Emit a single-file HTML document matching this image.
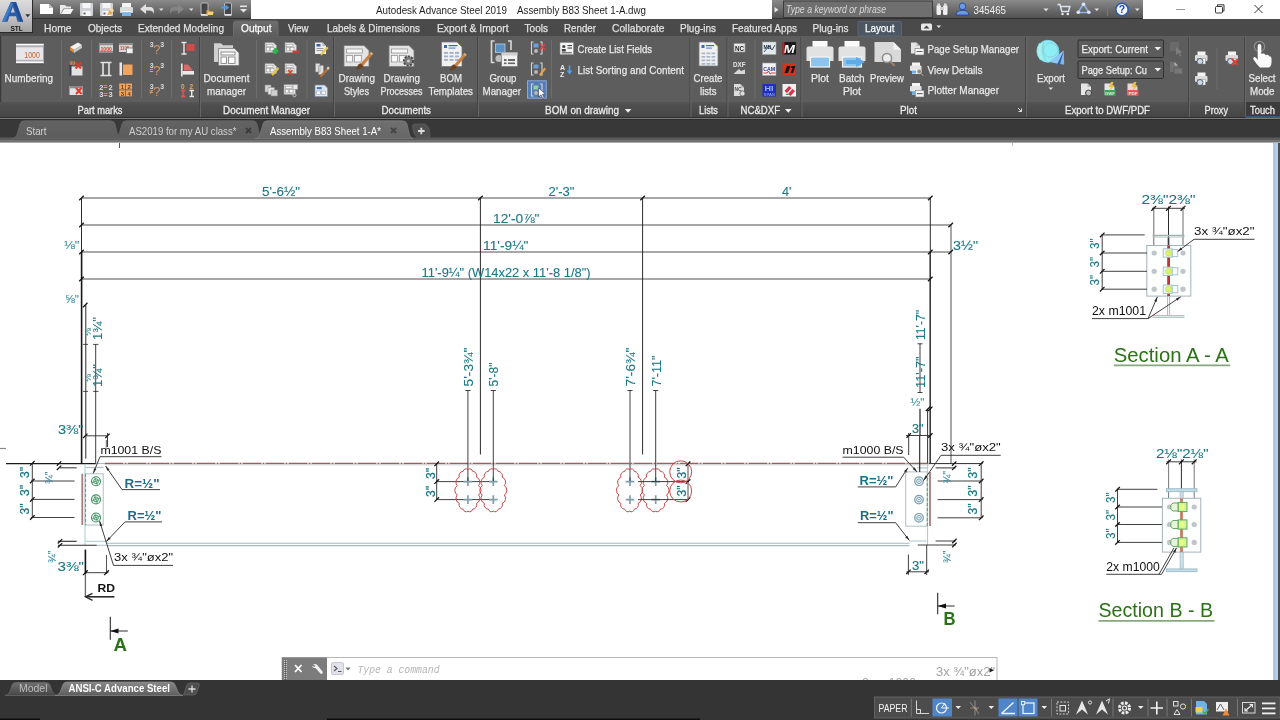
<!DOCTYPE html>
<html lang="en"><head><meta charset="utf-8"><title>Autodesk Advance Steel 2019 - Assembly B83 Sheet 1-A.dwg</title>
<style>html,body{margin:0;padding:0;background:#fff;overflow:hidden}body{width:1280px;height:720px;font-family:"Liberation Sans",sans-serif}svg{display:block;will-change:transform;font-family:"Liberation Sans",sans-serif}</style></head><body>
<svg width="1280" height="720" viewBox="0 0 1280 720">
<defs>
<linearGradient id="gApp" x1="0" y1="0" x2="0" y2="1"><stop offset="0" stop-color="#dcdcdc"/><stop offset="0.55" stop-color="#c2c0c4"/><stop offset="1" stop-color="#a2a2a2"/></linearGradient>
<linearGradient id="gQat" x1="0" y1="0" x2="0" y2="1"><stop offset="0" stop-color="#8a8a8a"/><stop offset="0.55" stop-color="#686868"/><stop offset="0.92" stop-color="#525252"/><stop offset="0.93" stop-color="#303030"/><stop offset="1" stop-color="#303030"/></linearGradient>
<linearGradient id="gA" x1="0" y1="0" x2="1" y2="1"><stop offset="0" stop-color="#4a8fd6"/><stop offset="1" stop-color="#1b4f9c"/></linearGradient>
<linearGradient id="gTabAct" x1="0" y1="0" x2="0" y2="1"><stop offset="0" stop-color="#6e6e6e"/><stop offset="1" stop-color="#5d5d5d"/></linearGradient>
<linearGradient id="gIconW" x1="0" y1="0" x2="0" y2="1"><stop offset="0" stop-color="#fafafa"/><stop offset="1" stop-color="#c8c8c8"/></linearGradient>
<linearGradient id="gFileTab" x1="0" y1="0" x2="0" y2="1"><stop offset="0" stop-color="#636363"/><stop offset="1" stop-color="#5c5c5c"/></linearGradient>
<linearGradient id="gFileTabA" x1="0" y1="0" x2="0" y2="1"><stop offset="0" stop-color="#707070"/><stop offset="1" stop-color="#666"/></linearGradient>
<linearGradient id="gTitle" x1="0" y1="0" x2="0" y2="1"><stop offset="0" stop-color="#545454"/><stop offset="0.3" stop-color="#4e4e4e"/><stop offset="1" stop-color="#464646"/></linearGradient>
<linearGradient id="gLt" x1="0" y1="0" x2="0" y2="1"><stop offset="0" stop-color="#6e6e6e"/><stop offset="1" stop-color="#464646"/></linearGradient><linearGradient id="gLtA" x1="0" y1="0" x2="0" y2="1"><stop offset="0" stop-color="#888"/><stop offset="1" stop-color="#5e5e5e"/></linearGradient>
</defs>
<rect x="0" y="0" width="1280" height="720" fill="#ffffff" />
<rect x="0" y="0" width="1280" height="19" fill="#ffffff" />
<rect x="32" y="0" width="219" height="19.5" fill="url(#gQat)" />
<rect x="772" y="0" width="371" height="19.5" fill="url(#gQat)" />
<rect x="0" y="19" width="1280" height="17" fill="#4a4a4a" />
<rect x="0" y="36" width="1280" height="66" fill="#5d5d5d" />
<rect x="0" y="36" width="1.2" height="82" fill="#3a3a3a" />
<rect x="0" y="102" width="1280" height="15" fill="url(#gTitle)" />
<rect x="0" y="117" width="1280" height="1" fill="#2e2e2e" />
<rect x="0" y="118" width="1280" height="1" fill="#7a7a7a" />
<rect x="0" y="119" width="1280" height="1" fill="#2d2d2d" />
<rect x="0" y="120" width="1280" height="18" fill="#383838" />
<rect x="0" y="137.5" width="1280" height="3" fill="#5a5a5a" />
<rect x="0" y="140" width="1280" height="2.6" fill="#737373" />
<rect x="0" y="0" width="32" height="32" fill="url(#gApp)" />
<rect x="32" y="0" width="1" height="32" fill="#2a2a2a" />
<rect x="0" y="32" width="33" height="1" fill="#2a2a2a" />
<path d="M2 21.8 L10.8 2 H16 L23.2 21.8 H17.6 L16 16.2 H9.4 L7.6 21.8 Z M10.8 12.4 H14.8 L12.9 7 Z" stroke="none" fill="#2a5ca8" stroke-width="1" fill-rule="evenodd"/>
<path d="M10.8 2 H16 L23.2 21.8 H20.4 L13.2 3.6 Z" stroke="none" fill="#1f4a8e" stroke-width="1" opacity="0.8"/>
<path d="M2 21.8 L10.8 2 L13.2 3.6 L5.2 21.8 Z" stroke="none" fill="#4a88cc" stroke-width="1" opacity="0.7"/>
<path d="M25.3 14.2 L30.3 14.2 L27.8 17.2 Z" stroke="none" fill="#333" stroke-width="1" />
<text x="10.5" y="30.6" font-size="7" fill="#1a1a1a" font-weight="bold" textLength="12.3" lengthAdjust="spacingAndGlyphs" >STL</text>
<path d="M40 4 H49 L53 8 V14 H40 Z" stroke="none" fill="#fff" stroke-width="1" />
<path d="M49 4 V8 H53 Z" stroke="none" fill="#bbb" stroke-width="1" />
<path d="M60 14 V5 H65 L66.5 6.5 H71 V8.5 H63.5 L60.5 14 Z" stroke="none" fill="#e8e8e8" stroke-width="1" />
<path d="M61 14 L64 9 H73.5 L70.5 14 Z" stroke="none" fill="#f4f4f4" stroke-width="1" />
<rect x="80" y="3" width="13" height="13" fill="#cfd3d8" rx="1"/>
<rect x="82.5" y="3" width="8" height="5" fill="#f6f6f6" />
<rect x="82.5" y="11" width="8" height="5" fill="#f6f6f6" />
<rect x="83.5" y="12.5" width="2" height="2" fill="#666" />
<rect x="100" y="3" width="13" height="13" fill="#cfd3d8" rx="1"/>
<rect x="102.5" y="3" width="8" height="5" fill="#f6f6f6" />
<rect x="102.5" y="11" width="8" height="5" fill="#f6f6f6" />
<rect x="103.5" y="12.5" width="2" height="2" fill="#666" />
<path d="M107 15.5 L109.5 10 L113 13.5 Z" stroke="none" fill="#e6a64a" stroke-width="1" />
<path d="M109 9.5 L111 7.5 L114 10.5 L112.5 12.5Z" stroke="none" fill="#f3d9a8" stroke-width="1" />
<rect x="122" y="3" width="9" height="4" fill="#f4f4f4" />
<rect x="120" y="7" width="13" height="6" fill="#dcdcdc" rx="1"/>
<rect x="122" y="11" width="9" height="5" fill="#7fb6e6" />
<rect x="122" y="11" width="9" height="1.2" fill="#f4f4f4" />
<path d="M140 9 L146 4 V7 H150 Q154 7 154 12 V14 Q153 10.5 149.5 10.5 H146 V14 Z" stroke="none" fill="#e0e0e0" stroke-width="1" />
<path d="M159 8.5 L163.5 8.5 L161.2 11 Z" stroke="none" fill="#ddd" stroke-width="1" />
<path d="M184 9 L178 4 V7 H174 Q170 7 170 12 V14 Q171 10.5 174.5 10.5 H178 V14 Z" stroke="none" fill="#858585" stroke-width="1" />
<path d="M189 8.5 L193.5 8.5 L191.2 11 Z" stroke="none" fill="#ddd" stroke-width="1" />
<rect x="201" y="3" width="7" height="12.5" fill="#454545" stroke="#cfcfcf" stroke-width="0.8" rx="1"/>
<rect x="201" y="14" width="7" height="1.5" fill="#e4e4e4" />
<path d="M206.5 15 V10.2 H209 L210 11.2 H213 V15 Z" stroke="none" fill="#e0aa48" stroke-width="1" />
<path d="M207 15 L208.3 12 H213.8 L212.6 15 Z" stroke="none" fill="#f3cf7a" stroke-width="1" />
<rect x="224.5" y="3" width="7" height="12.5" fill="#454545" stroke="#cfcfcf" stroke-width="0.8" rx="1"/>
<rect x="224.5" y="14" width="7" height="1.5" fill="#e4e4e4" />
<path d="M221 6.6 H225.5 V4.6 L229.3 7.6 L225.5 10.6 V8.6 H221 Z" stroke="none" fill="#4a9ae8" stroke-width="1" />
<rect x="240" y="5.5" width="7" height="1.6" fill="#e6e6e6" />
<path d="M240 9 H247 L243.5 12.5 Z" stroke="none" fill="#e6e6e6" stroke-width="1" />
<text x="376" y="13.5" font-size="11.5" fill="#1e1e1e" textLength="131" lengthAdjust="spacingAndGlyphs" >Autodesk Advance Steel 2019</text>
<text x="517" y="13.5" font-size="11.5" fill="#1e1e1e" textLength="129" lengthAdjust="spacingAndGlyphs" >Assembly B83 Sheet 1-A.dwg</text>
<path d="M774.5 7 L778.5 9.7 L774.5 12.5 Z" stroke="none" fill="#e6e6e6" stroke-width="1" />
<rect x="783.5" y="1" width="149" height="16.5" fill="#6f6f6f" stroke="#3c3c3c" stroke-width="1"/>
<text x="786" y="12.8" font-size="11" fill="#d9d9d9" font-style="italic" textLength="100" lengthAdjust="spacingAndGlyphs" >Type a keyword or phrase</text>
<rect x="936.5" y="5" width="4.5" height="10" fill="#efefef" rx="1.5"/>
<rect x="943" y="5" width="4.5" height="10" fill="#efefef" rx="1.5"/>
<rect x="940" y="7" width="4" height="3" fill="#cfcfcf" />
<rect x="937.5" y="3.5" width="2.5" height="2.5" fill="#dedede" />
<rect x="944" y="3.5" width="2.5" height="2.5" fill="#dedede" />
<circle cx="962.5" cy="6.3" r="3.3" stroke="#1f3f8a" fill="#6a9ae6" stroke-width="0.8" />
<path d="M956 15 Q956.5 10.3 962.5 10.3 Q968.5 10.3 969 15 Z" stroke="#1f3f8a" fill="#6a9ae6" stroke-width="0.8" />
<text x="973.5" y="14" font-size="11.5" fill="#f0f0f0" textLength="32.5" lengthAdjust="spacingAndGlyphs" >345465</text>
<path d="M1043.5 8.5 H1048.5 L1046 11.2 Z" stroke="none" fill="#e8e8e8" stroke-width="1" />
<path d="M1057.5 4.5 H1060 L1061.8 11.5 H1068.5 L1069.8 6.5 H1061" stroke="#dbe4f2" fill="none" stroke-width="1.5" />
<circle cx="1062.5" cy="14" r="1.2" stroke="none" fill="#f2f2f2" stroke-width="1" />
<circle cx="1067.8" cy="14" r="1.2" stroke="none" fill="#f2f2f2" stroke-width="1" />
<path d="M1083.5 4 L1089 12.5 H1078 Z" stroke="#8fb0ea" fill="none" stroke-width="1.6" />
<circle cx="1083.5" cy="4.2" r="1.8" stroke="none" fill="#dfe8fb" stroke-width="1" />
<circle cx="1078.3" cy="12.3" r="1.8" stroke="none" fill="#dfe8fb" stroke-width="1" />
<circle cx="1088.8" cy="12.3" r="1.8" stroke="none" fill="#dfe8fb" stroke-width="1" />
<path d="M1094.5 8.5 H1099 L1096.8 11 Z" stroke="none" fill="#e8e8e8" stroke-width="1" />
<rect x="1107" y="3" width="1" height="13" fill="#777" />
<circle cx="1122" cy="9.5" r="6.2" stroke="#2b5bb0" fill="#f6f6f6" stroke-width="1.6" />
<text x="1122" y="13.3" font-size="10.5" fill="#1f4ca0" text-anchor="middle" font-weight="bold" >?</text>
<path d="M1135 8.5 H1139.5 L1137.3 11 Z" stroke="none" fill="#e8e8e8" stroke-width="1" />
<rect x="1176" y="9" width="9" height="1" fill="#9a9a9a" />
<rect x="1215.5" y="6.5" width="7" height="6.5" fill="none" stroke="#333" stroke-width="1" rx="1"/>
<path d="M1217.5 6.5 V4.8 H1224 V11 H1222.5" stroke="#333" fill="none" stroke-width="1" />
<path d="M1254.5 5 L1262.5 13 M1262.5 5 L1254.5 13" stroke="#333" fill="none" stroke-width="1" />
<path d="M233.5 36 V23 Q233.5 21 235.5 21 H276 Q278 21 278 23 V36 Z" stroke="#6b6b6b" fill="url(#gTabAct)" stroke-width="1" />
<rect x="234" y="35" width="43.5" height="1.5" fill="#5d5d5d" />
<rect x="858" y="21.5" width="43.5" height="14.5" fill="#4c5763" stroke="#586675" stroke-width="1" rx="1"/>
<text x="44" y="32" font-size="11.5" fill="#e2e2e2" textLength="27.5" lengthAdjust="spacingAndGlyphs" stroke="#e2e2e2" stroke-width="0.25" >Home</text>
<text x="88" y="32" font-size="11.5" fill="#e2e2e2" textLength="34" lengthAdjust="spacingAndGlyphs" stroke="#e2e2e2" stroke-width="0.25" >Objects</text>
<text x="138" y="32" font-size="11.5" fill="#e2e2e2" textLength="86" lengthAdjust="spacingAndGlyphs" stroke="#e2e2e2" stroke-width="0.25" >Extended Modeling</text>
<text x="241" y="32" font-size="11.5" fill="#ffffff" textLength="30.5" lengthAdjust="spacingAndGlyphs" stroke="#ffffff" stroke-width="0.25" >Output</text>
<text x="288" y="32" font-size="11.5" fill="#e2e2e2" textLength="20.5" lengthAdjust="spacingAndGlyphs" stroke="#e2e2e2" stroke-width="0.25" >View</text>
<text x="327" y="32" font-size="11.5" fill="#e2e2e2" textLength="93" lengthAdjust="spacingAndGlyphs" stroke="#e2e2e2" stroke-width="0.25" >Labels &amp; Dimensions</text>
<text x="437" y="32" font-size="11.5" fill="#e2e2e2" textLength="71.5" lengthAdjust="spacingAndGlyphs" stroke="#e2e2e2" stroke-width="0.25" >Export &amp; Import</text>
<text x="524.5" y="32" font-size="11.5" fill="#e2e2e2" textLength="23.5" lengthAdjust="spacingAndGlyphs" stroke="#e2e2e2" stroke-width="0.25" >Tools</text>
<text x="564" y="32" font-size="11.5" fill="#e2e2e2" textLength="32" lengthAdjust="spacingAndGlyphs" stroke="#e2e2e2" stroke-width="0.25" >Render</text>
<text x="612" y="32" font-size="11.5" fill="#e2e2e2" textLength="52.5" lengthAdjust="spacingAndGlyphs" stroke="#e2e2e2" stroke-width="0.25" >Collaborate</text>
<text x="680" y="32" font-size="11.5" fill="#e2e2e2" textLength="36" lengthAdjust="spacingAndGlyphs" stroke="#e2e2e2" stroke-width="0.25" >Plug-ins</text>
<text x="732" y="32" font-size="11.5" fill="#e2e2e2" textLength="65" lengthAdjust="spacingAndGlyphs" stroke="#e2e2e2" stroke-width="0.25" >Featured Apps</text>
<text x="812.5" y="32" font-size="11.5" fill="#e2e2e2" textLength="36" lengthAdjust="spacingAndGlyphs" stroke="#e2e2e2" stroke-width="0.25" >Plug-ins</text>
<text x="865" y="32" font-size="11.5" fill="#ffffff" textLength="29.5" lengthAdjust="spacingAndGlyphs" stroke="#ffffff" stroke-width="0.25" >Layout</text>
<rect x="921" y="23.5" width="11" height="7" fill="#e8e8e8" rx="1.5"/>
<path d="M923.5 28.5 H929.5 L926.5 25.5 Z" stroke="none" fill="#444" stroke-width="1" />
<path d="M936.5 25.5 H941 L938.8 28 Z" stroke="none" fill="#e8e8e8" stroke-width="1" />
<rect x="199.0" y="37" width="1" height="80" fill="#444444" />
<rect x="200.0" y="37" width="1" height="80" fill="#666666" />
<rect x="333.0" y="37" width="1" height="80" fill="#444444" />
<rect x="334.0" y="37" width="1" height="80" fill="#666666" />
<rect x="477.0" y="37" width="1" height="80" fill="#444444" />
<rect x="478.0" y="37" width="1" height="80" fill="#666666" />
<rect x="689.5" y="37" width="1" height="80" fill="#444444" />
<rect x="690.5" y="37" width="1" height="80" fill="#666666" />
<rect x="726.5" y="37" width="1" height="80" fill="#444444" />
<rect x="727.5" y="37" width="1" height="80" fill="#666666" />
<rect x="800.5" y="37" width="1" height="80" fill="#444444" />
<rect x="801.5" y="37" width="1" height="80" fill="#666666" />
<rect x="1025.0" y="37" width="1" height="80" fill="#444444" />
<rect x="1026.0" y="37" width="1" height="80" fill="#666666" />
<rect x="1188.0" y="37" width="1" height="80" fill="#444444" />
<rect x="1189.0" y="37" width="1" height="80" fill="#666666" />
<rect x="1244.0" y="37" width="1" height="80" fill="#444444" />
<rect x="1245.0" y="37" width="1" height="80" fill="#666666" />
<rect x="61" y="40" width="1" height="58" fill="#6e6e6e" />
<rect x="91" y="40" width="1" height="58" fill="#6e6e6e" />
<rect x="141" y="40" width="1" height="58" fill="#6e6e6e" />
<rect x="171" y="40" width="1" height="58" fill="#6e6e6e" />
<rect x="256" y="40" width="1" height="58" fill="#6e6e6e" />
<rect x="551" y="40" width="1" height="58" fill="#6e6e6e" />
<rect x="754.5" y="40" width="1" height="58" fill="#6e6e6e" />
<rect x="1216.5" y="48" width="1" height="41" fill="#6e6e6e" />
<rect x="306.5" y="40" width="1" height="58" fill="#6e6e6e" />
<rect x="1246" y="102" width="34" height="15" fill="#3c3c3c" />
<text x="77.5" y="114.3" font-size="11.5" fill="#ececec" textLength="45" lengthAdjust="spacingAndGlyphs" stroke="#ececec" stroke-width="0.3" >Part marks</text>
<text x="223" y="114.3" font-size="11.5" fill="#ececec" textLength="87" lengthAdjust="spacingAndGlyphs" stroke="#ececec" stroke-width="0.3" >Document Manager</text>
<text x="381.5" y="114.3" font-size="11.5" fill="#ececec" textLength="49.5" lengthAdjust="spacingAndGlyphs" stroke="#ececec" stroke-width="0.3" >Documents</text>
<text x="545" y="114.3" font-size="11.5" fill="#ececec" textLength="74" lengthAdjust="spacingAndGlyphs" stroke="#ececec" stroke-width="0.3" >BOM on drawing</text>
<text x="699" y="114.3" font-size="11.5" fill="#ececec" textLength="19" lengthAdjust="spacingAndGlyphs" stroke="#ececec" stroke-width="0.3" >Lists</text>
<text x="740.5" y="114.3" font-size="11.5" fill="#ececec" textLength="39.5" lengthAdjust="spacingAndGlyphs" stroke="#ececec" stroke-width="0.3" >NC&amp;DXF</text>
<text x="900" y="114.3" font-size="11.5" fill="#ececec" textLength="17" lengthAdjust="spacingAndGlyphs" stroke="#ececec" stroke-width="0.3" >Plot</text>
<text x="1065" y="114.3" font-size="11.5" fill="#ececec" textLength="85" lengthAdjust="spacingAndGlyphs" stroke="#ececec" stroke-width="0.3" >Export to DWF/PDF</text>
<text x="1204.5" y="114.3" font-size="11.5" fill="#ececec" textLength="23.5" lengthAdjust="spacingAndGlyphs" stroke="#ececec" stroke-width="0.3" >Proxy</text>
<text x="1250" y="114.3" font-size="11.5" fill="#ececec" textLength="25" lengthAdjust="spacingAndGlyphs" stroke="#ececec" stroke-width="0.3" >Touch</text>
<path d="M624.8 109 H631.4 L628.1 112.8 Z" stroke="none" fill="#f0f0f0" stroke-width="1" />
<path d="M785 109 H791.6 L788.3 112.8 Z" stroke="none" fill="#f0f0f0" stroke-width="1" />
<path d="M1018 108 L1021.5 111.5 M1021.5 108.5 V111.5 H1018.5" stroke="#ddd" fill="none" stroke-width="1" />
<rect x="1246" y="116.3" width="34" height="1.6" fill="#3d5f92" />
<text x="4.5" y="81.5" font-size="11.5" fill="#eaeaea" textLength="48.5" lengthAdjust="spacingAndGlyphs" stroke="#eaeaea" stroke-width="0.25" >Numbering</text>
<text x="203.5" y="81.5" font-size="11.5" fill="#eaeaea" textLength="46" lengthAdjust="spacingAndGlyphs" stroke="#eaeaea" stroke-width="0.25" >Document</text>
<text x="207" y="94.5" font-size="11.5" fill="#eaeaea" textLength="39" lengthAdjust="spacingAndGlyphs" stroke="#eaeaea" stroke-width="0.25" >manager</text>
<text x="338.5" y="81.5" font-size="11.5" fill="#eaeaea" textLength="36.5" lengthAdjust="spacingAndGlyphs" stroke="#eaeaea" stroke-width="0.25" >Drawing</text>
<text x="344" y="94.5" font-size="11.5" fill="#eaeaea" textLength="25" lengthAdjust="spacingAndGlyphs" stroke="#eaeaea" stroke-width="0.25" >Styles</text>
<text x="383.5" y="81.5" font-size="11.5" fill="#eaeaea" textLength="36.5" lengthAdjust="spacingAndGlyphs" stroke="#eaeaea" stroke-width="0.25" >Drawing</text>
<text x="380.5" y="94.5" font-size="11.5" fill="#eaeaea" textLength="42" lengthAdjust="spacingAndGlyphs" stroke="#eaeaea" stroke-width="0.25" >Processes</text>
<text x="440" y="81.5" font-size="11.5" fill="#eaeaea" textLength="22" lengthAdjust="spacingAndGlyphs" stroke="#eaeaea" stroke-width="0.25" >BOM</text>
<text x="428.5" y="94.5" font-size="11.5" fill="#eaeaea" textLength="44.5" lengthAdjust="spacingAndGlyphs" stroke="#eaeaea" stroke-width="0.25" >Templates</text>
<text x="489.5" y="81.5" font-size="11.5" fill="#eaeaea" textLength="27" lengthAdjust="spacingAndGlyphs" stroke="#eaeaea" stroke-width="0.25" >Group</text>
<text x="482.5" y="94.5" font-size="11.5" fill="#eaeaea" textLength="38.5" lengthAdjust="spacingAndGlyphs" stroke="#eaeaea" stroke-width="0.25" >Manager</text>
<text x="693.5" y="81.5" font-size="11.5" fill="#eaeaea" textLength="29" lengthAdjust="spacingAndGlyphs" stroke="#eaeaea" stroke-width="0.25" >Create</text>
<text x="700" y="94.5" font-size="11.5" fill="#eaeaea" textLength="16.5" lengthAdjust="spacingAndGlyphs" stroke="#eaeaea" stroke-width="0.25" >lists</text>
<text x="811" y="81.5" font-size="11.5" fill="#eaeaea" textLength="18" lengthAdjust="spacingAndGlyphs" stroke="#eaeaea" stroke-width="0.25" >Plot</text>
<text x="839" y="81.5" font-size="11.5" fill="#eaeaea" textLength="25.5" lengthAdjust="spacingAndGlyphs" stroke="#eaeaea" stroke-width="0.25" >Batch</text>
<text x="843" y="94.5" font-size="11.5" fill="#eaeaea" textLength="18" lengthAdjust="spacingAndGlyphs" stroke="#eaeaea" stroke-width="0.25" >Plot</text>
<text x="870" y="81.5" font-size="11.5" fill="#eaeaea" textLength="34" lengthAdjust="spacingAndGlyphs" stroke="#eaeaea" stroke-width="0.25" >Preview</text>
<text x="1037" y="81.5" font-size="11.5" fill="#eaeaea" textLength="28" lengthAdjust="spacingAndGlyphs" stroke="#eaeaea" stroke-width="0.25" >Export</text>
<text x="1248.5" y="81.6" font-size="11.5" fill="#eaeaea" textLength="27" lengthAdjust="spacingAndGlyphs" stroke="#eaeaea" stroke-width="0.25" >Select</text>
<text x="1250" y="94.7" font-size="11.5" fill="#eaeaea" textLength="24.5" lengthAdjust="spacingAndGlyphs" stroke="#eaeaea" stroke-width="0.25" >Mode</text>
<path d="M1048.5 87.5 H1053 L1050.8 90 Z" stroke="none" fill="#e0e0e0" stroke-width="1" />
<text x="577.5" y="52.5" font-size="11.5" fill="#eaeaea" textLength="74.5" lengthAdjust="spacingAndGlyphs" stroke="#eaeaea" stroke-width="0.25" >Create List Fields</text>
<text x="577.5" y="73.5" font-size="11.5" fill="#eaeaea" textLength="106.5" lengthAdjust="spacingAndGlyphs" stroke="#eaeaea" stroke-width="0.25" >List Sorting and Content</text>
<text x="927.5" y="52.5" font-size="11.5" fill="#eaeaea" textLength="91.5" lengthAdjust="spacingAndGlyphs" stroke="#eaeaea" stroke-width="0.25" >Page Setup Manager</text>
<text x="927.5" y="73.5" font-size="11.5" fill="#eaeaea" textLength="55" lengthAdjust="spacingAndGlyphs" stroke="#eaeaea" stroke-width="0.25" >View Details</text>
<text x="927.5" y="94" font-size="11.5" fill="#eaeaea" textLength="71.5" lengthAdjust="spacingAndGlyphs" stroke="#eaeaea" stroke-width="0.25" >Plotter Manager</text>
<rect x="1078" y="40" width="85.5" height="17.5" fill="#5c5c5c" stroke="#2e2e2e" stroke-width="1" rx="1"/>
<text x="1081.5" y="53" font-size="11.5" fill="#efefef" textLength="66.5" lengthAdjust="spacingAndGlyphs" stroke="#efefef" stroke-width="0.25" >Export: Current</text>
<path d="M1154.5 47 H1161 L1157.8 50.5 Z" stroke="none" fill="#f0f0f0" stroke-width="1" />
<rect x="1078" y="61" width="85.5" height="17.5" fill="#5c5c5c" stroke="#2e2e2e" stroke-width="1" rx="1"/>
<text x="1081.5" y="74" font-size="11.5" fill="#efefef" textLength="65.5" lengthAdjust="spacingAndGlyphs" stroke="#efefef" stroke-width="0.25" >Page Setup: Cu</text>
<path d="M1154.5 68 H1161 L1157.8 71.5 Z" stroke="none" fill="#f0f0f0" stroke-width="1" />
<g id="drawing">
<line x1="119.5" y1="143" x2="119.5" y2="148" stroke="#555" stroke-width="1" />
<line x1="81.5" y1="198" x2="931" y2="198" stroke="#8a8a8a" stroke-width="1.3" />
<line x1="81.5" y1="225" x2="951" y2="225" stroke="#8a8a8a" stroke-width="1.3" />
<line x1="81.5" y1="252" x2="951" y2="252" stroke="#8a8a8a" stroke-width="1.3" />
<line x1="81.5" y1="279" x2="931" y2="279" stroke="#8a8a8a" stroke-width="1.3" />
<line x1="81.5" y1="198" x2="81.5" y2="252" stroke="#2a2a2a" stroke-width="1" />
<line x1="81.6" y1="252" x2="81.6" y2="463.6" stroke="#161616" stroke-width="1.6" />
<line x1="79.2" y1="200.3" x2="83.8" y2="195.7" stroke="#141414" stroke-width="1.25" />
<line x1="79.2" y1="227.3" x2="83.8" y2="222.7" stroke="#141414" stroke-width="1.25" />
<line x1="79.2" y1="254.3" x2="83.8" y2="249.7" stroke="#141414" stroke-width="1.25" />
<line x1="79.2" y1="281.3" x2="83.8" y2="276.7" stroke="#141414" stroke-width="1.25" />
<line x1="85.8" y1="305" x2="85.8" y2="458.7" stroke="#2a2a2a" stroke-width="1" />
<line x1="95.7" y1="344" x2="95.7" y2="464" stroke="#2a2a2a" stroke-width="0.9" />
<line x1="83.1" y1="307.2" x2="87.5" y2="302.8" stroke="#141414" stroke-width="1.25" />
<line x1="83" y1="344.4" x2="88" y2="344.4" stroke="#2a2a2a" stroke-width="0.8" />
<line x1="93" y1="344.4" x2="98.5" y2="344.4" stroke="#2a2a2a" stroke-width="0.8" />
<line x1="83" y1="391.4" x2="88" y2="391.4" stroke="#2a2a2a" stroke-width="0.8" />
<line x1="93" y1="391.4" x2="98.5" y2="391.4" stroke="#2a2a2a" stroke-width="0.8" />
<line x1="480.4" y1="198" x2="480.4" y2="454.5" stroke="#2a2a2a" stroke-width="1" />
<line x1="642.6" y1="198" x2="642.6" y2="454.5" stroke="#2a2a2a" stroke-width="1" />
<line x1="478.09999999999997" y1="200.3" x2="482.7" y2="195.7" stroke="#141414" stroke-width="1.25" />
<line x1="640.3000000000001" y1="200.3" x2="644.9" y2="195.7" stroke="#141414" stroke-width="1.25" />
<line x1="930.3" y1="198" x2="930.3" y2="252" stroke="#2a2a2a" stroke-width="1" />
<line x1="930.2" y1="252" x2="930.2" y2="463.6" stroke="#3a3a3a" stroke-width="1.6" />
<line x1="951" y1="225" x2="951" y2="463.6" stroke="#3c3c3c" stroke-width="0.9" />
<line x1="928.0" y1="200.3" x2="932.5999999999999" y2="195.7" stroke="#141414" stroke-width="1.25" />
<line x1="948.4000000000001" y1="227.3" x2="953.0" y2="222.7" stroke="#141414" stroke-width="1.25" />
<line x1="928.0" y1="254.3" x2="932.5999999999999" y2="249.7" stroke="#141414" stroke-width="1.25" />
<line x1="948.4000000000001" y1="254.3" x2="953.0" y2="249.7" stroke="#141414" stroke-width="1.25" />
<line x1="928.0" y1="281.3" x2="932.5999999999999" y2="276.7" stroke="#141414" stroke-width="1.25" />
<text x="262" y="196" font-size="12.5" fill="#1b7886" textLength="38" lengthAdjust="spacingAndGlyphs" stroke="#1b7886" stroke-width="0.1" >5&#x27;-6½&quot;</text>
<text x="548.5" y="196" font-size="12.5" fill="#1b7886" textLength="26" lengthAdjust="spacingAndGlyphs" stroke="#1b7886" stroke-width="0.1" >2&#x27;-3&quot;</text>
<text x="782" y="196" font-size="12.5" fill="#1b7886" textLength="9.5" lengthAdjust="spacingAndGlyphs" stroke="#1b7886" stroke-width="0.1" >4&#x27;</text>
<text x="493" y="223" font-size="12.5" fill="#1b7886" textLength="46.5" lengthAdjust="spacingAndGlyphs" stroke="#1b7886" stroke-width="0.1" >12&#x27;-0⅞&quot;</text>
<text x="483" y="250" font-size="12.5" fill="#1b7886" textLength="45.5" lengthAdjust="spacingAndGlyphs" stroke="#1b7886" stroke-width="0.1" >11&#x27;-9¼&quot;</text>
<text x="421.5" y="277" font-size="12.5" fill="#1b7886" textLength="169" lengthAdjust="spacingAndGlyphs" stroke="#1b7886" stroke-width="0.1" >11&#x27;-9¼&quot; (W14x22 x 11&#x27;-8 1/8&quot;)</text>
<text x="64" y="249" font-size="11.5" fill="#3f8fa1" textLength="15.5" lengthAdjust="spacingAndGlyphs" stroke="#3f8fa1" stroke-width="0.1" >⅛&quot;</text>
<text x="65" y="302.5" font-size="11.5" fill="#3f8fa1" textLength="14" lengthAdjust="spacingAndGlyphs" stroke="#3f8fa1" stroke-width="0.1" >⅝&quot;</text>
<text x="953" y="250" font-size="12.5" fill="#1b7886" textLength="25" lengthAdjust="spacingAndGlyphs" stroke="#1b7886" stroke-width="0.1" >3½&quot;</text>
<text x="102" y="340" font-size="12.5" fill="#1b7886" textLength="23" lengthAdjust="spacingAndGlyphs" stroke="#1b7886" stroke-width="0.1" transform="rotate(-90 102 340)" >1¾&quot;</text>
<text x="102" y="387" font-size="12.5" fill="#1b7886" textLength="23" lengthAdjust="spacingAndGlyphs" stroke="#1b7886" stroke-width="0.1" transform="rotate(-90 102 387)" >1¾&quot;</text>
<text x="90.5" y="336" font-size="9" fill="#3f8fa1" textLength="8" lengthAdjust="spacingAndGlyphs" stroke="#3f8fa1" stroke-width="0.1" transform="rotate(-90 90.5 336)" >⅛</text>
<text x="90.5" y="382" font-size="9" fill="#3f8fa1" textLength="8" lengthAdjust="spacingAndGlyphs" stroke="#3f8fa1" stroke-width="0.1" transform="rotate(-90 90.5 382)" >⅛</text>
<text x="58" y="433.5" font-size="12.5" fill="#1b7886" textLength="25.5" lengthAdjust="spacingAndGlyphs" stroke="#1b7886" stroke-width="0.1" >3⅜&quot;</text>
<line x1="85.3" y1="435.8" x2="107.5" y2="435.8" stroke="#2a2a2a" stroke-width="0.9" />
<line x1="83.1" y1="438.0" x2="87.5" y2="433.6" stroke="#141414" stroke-width="1.25" />
<line x1="105.3" y1="438.0" x2="109.7" y2="433.6" stroke="#141414" stroke-width="1.25" />
<line x1="107.5" y1="433" x2="107.5" y2="447" stroke="#2a2a2a" stroke-width="0.9" />
<line x1="6" y1="463.6" x2="95.8" y2="463.6" stroke="#1a1a1a" stroke-width="1.3" />
<line x1="0" y1="448.5" x2="6" y2="448.5" stroke="#888" stroke-width="1.2" />
<line x1="104.5" y1="463.3" x2="929" y2="463.3" stroke="#7e3a3a" stroke-width="1" stroke-dasharray="19 1 2 1"/>
<line x1="104.5" y1="464.8" x2="929" y2="464.8" stroke="#c6c6c6" stroke-width="1" />
<line x1="95.8" y1="463.5" x2="104.5" y2="463.5" stroke="#9cc0cc" stroke-width="1" />
<line x1="85.4" y1="467.5" x2="103.5" y2="467.5" stroke="#a9c3cc" stroke-width="1.2" />
<line x1="917" y1="467.9" x2="927.6" y2="467.9" stroke="#a9c3cc" stroke-width="1.2" />
<line x1="106.5" y1="543.3" x2="909.5" y2="543.3" stroke="#a3b9bf" stroke-width="1.1" />
<line x1="106.5" y1="545.6" x2="909.5" y2="545.6" stroke="#a3b9bf" stroke-width="1.1" />
<line x1="85.8" y1="541.3" x2="106.5" y2="541.3" stroke="#a9c8d2" stroke-width="1" />
<line x1="96.7" y1="545.3" x2="106.5" y2="545.3" stroke="#a9c8d2" stroke-width="1" />
<line x1="909.5" y1="541" x2="926.7" y2="541" stroke="#a9c8d2" stroke-width="1" />
<line x1="85" y1="464" x2="85" y2="545.3" stroke="#a9c8d2" stroke-width="1" />
<line x1="927.6" y1="463.6" x2="927.6" y2="545" stroke="#a9c8d2" stroke-width="1" />
<rect x="85.2" y="473.8" width="18" height="51.2" fill="none" stroke="#aebfc6" stroke-width="1"/>
<line x1="82.3" y1="473.8" x2="82.3" y2="525" stroke="#a87c7c" stroke-width="1.8" />
<line x1="85.6" y1="474" x2="85.6" y2="525" stroke="#58a070" stroke-width="1" stroke-dasharray="3 2"/>
<circle cx="96" cy="481.2" r="4.5" stroke="#3f9062" fill="#f2f8f3" stroke-width="1.1" />
<circle cx="96" cy="481.2" r="2.4" stroke="#3f9062" fill="none" stroke-width="0.9" />
<path d="M91.8 482.7 L100.2 479.7 M94.5 477.0 L97.5 485.4" stroke="#3f9062" fill="none" stroke-width="0.8" />
<circle cx="96" cy="499.4" r="4.5" stroke="#3f9062" fill="#f2f8f3" stroke-width="1.1" />
<circle cx="96" cy="499.4" r="2.4" stroke="#3f9062" fill="none" stroke-width="0.9" />
<path d="M91.8 500.9 L100.2 497.9 M94.5 495.2 L97.5 503.59999999999997" stroke="#3f9062" fill="none" stroke-width="0.8" />
<circle cx="96" cy="517.5" r="4.5" stroke="#3f9062" fill="#f2f8f3" stroke-width="1.1" />
<circle cx="96" cy="517.5" r="2.4" stroke="#3f9062" fill="none" stroke-width="0.9" />
<path d="M91.8 519.0 L100.2 516.0 M94.5 513.3 L97.5 521.7" stroke="#3f9062" fill="none" stroke-width="0.8" />
<line x1="31" y1="481" x2="74.5" y2="481" stroke="#2a2a2a" stroke-width="0.9" />
<line x1="29.999999999999996" y1="483.3" x2="34.599999999999994" y2="478.7" stroke="#141414" stroke-width="1.25" />
<line x1="31" y1="499.4" x2="74.5" y2="499.4" stroke="#2a2a2a" stroke-width="0.9" />
<line x1="29.999999999999996" y1="501.7" x2="34.599999999999994" y2="497.09999999999997" stroke="#141414" stroke-width="1.25" />
<line x1="31" y1="517.5" x2="74.5" y2="517.5" stroke="#2a2a2a" stroke-width="0.9" />
<line x1="29.999999999999996" y1="519.8" x2="34.599999999999994" y2="515.2" stroke="#141414" stroke-width="1.25" />
<line x1="29.999999999999996" y1="465.6" x2="34.599999999999994" y2="461.0" stroke="#141414" stroke-width="1.25" />
<line x1="32.3" y1="463.3" x2="32.3" y2="517.5" stroke="#2a2a2a" stroke-width="0.9" />
<text x="28.5" y="478" font-size="13" fill="#1b7886" textLength="11" lengthAdjust="spacingAndGlyphs" stroke="#1b7886" stroke-width="0.25" transform="rotate(-90 28.5 478)" >3&quot;</text>
<text x="28.5" y="496" font-size="13" fill="#1b7886" textLength="11" lengthAdjust="spacingAndGlyphs" stroke="#1b7886" stroke-width="0.25" transform="rotate(-90 28.5 496)" >3&quot;</text>
<text x="28.5" y="514.5" font-size="13" fill="#1b7886" textLength="11" lengthAdjust="spacingAndGlyphs" stroke="#1b7886" stroke-width="0.25" transform="rotate(-90 28.5 514.5)" >3&quot;</text>
<line x1="60" y1="467.8" x2="76.7" y2="467.8" stroke="#444" stroke-width="1.1" />
<line x1="56.8" y1="465.8" x2="61.2" y2="461.40000000000003" stroke="#141414" stroke-width="1.25" />
<line x1="56.8" y1="470.0" x2="61.2" y2="465.6" stroke="#141414" stroke-width="1.25" />
<text x="52.5" y="484" font-size="10" fill="#3f8fa1" textLength="12.5" lengthAdjust="spacingAndGlyphs" stroke="#3f8fa1" stroke-width="0.1" transform="rotate(-90 52.5 484)" >¾&quot;</text>
<line x1="58" y1="541.3" x2="76.7" y2="541.3" stroke="#2a2a2a" stroke-width="1.1" />
<line x1="58" y1="545.3" x2="96.7" y2="545.3" stroke="#2a2a2a" stroke-width="1.1" />
<line x1="57.8" y1="543.5" x2="62.2" y2="539.0999999999999" stroke="#141414" stroke-width="1.25" />
<line x1="57.8" y1="547.5" x2="62.2" y2="543.0999999999999" stroke="#141414" stroke-width="1.25" />
<text x="56" y="563" font-size="10" fill="#3f8fa1" textLength="12.5" lengthAdjust="spacingAndGlyphs" stroke="#3f8fa1" stroke-width="0.1" transform="rotate(-90 56 563)" >¾&quot;</text>
<text x="57.5" y="571" font-size="12.5" fill="#1b7886" textLength="26.5" lengthAdjust="spacingAndGlyphs" stroke="#1b7886" stroke-width="0.1" >3⅜&quot;</text>
<line x1="85.4" y1="549.6" x2="85.4" y2="574" stroke="#161616" stroke-width="1.6" />
<line x1="85.4" y1="574" x2="85.4" y2="597" stroke="#6a6a6a" stroke-width="1.3" />
<line x1="106.5" y1="555" x2="106.5" y2="574" stroke="#555" stroke-width="1" />
<line x1="85.4" y1="572.7" x2="108.5" y2="572.7" stroke="#2a2a2a" stroke-width="0.9" />
<line x1="83.0" y1="575.1" x2="87.80000000000001" y2="570.3000000000001" stroke="#141414" stroke-width="1.25" />
<line x1="104.1" y1="575.1" x2="108.9" y2="570.3000000000001" stroke="#141414" stroke-width="1.25" />
<line x1="106.3" y1="440" x2="106.3" y2="447.5" stroke="#666" stroke-width="1" />
<text x="100.4" y="454.2" font-size="10.2" fill="#111" textLength="61" lengthAdjust="spacingAndGlyphs" >m1001 B/S</text>
<path d="M161.5 456.7 H100 L93.3 473.3" stroke="#2a2a2a" fill="none" stroke-width="0.9" />
<path d="M93.3 473.3 L94.0 468.2 L96.4 469.1 Z" stroke="none" fill="#2a2a2a" stroke-width="1" />
<text x="124.5" y="487.5" font-size="12.5" fill="#1a7088" font-weight="bold" textLength="35" lengthAdjust="spacingAndGlyphs" >R=½&quot;</text>
<path d="M160 489.6 H122 L105.6 466" stroke="#2a2a2a" fill="none" stroke-width="0.9" />
<path d="M105.6 466.0 L109.5 469.4 L107.4 470.8 Z" stroke="none" fill="#2a2a2a" stroke-width="1" />
<text x="127.5" y="519.7" font-size="12.5" fill="#1a7088" font-weight="bold" textLength="34" lengthAdjust="spacingAndGlyphs" >R=½&quot;</text>
<path d="M162 521.9 H125 L106.3 541.5" stroke="#2a2a2a" fill="none" stroke-width="0.9" />
<path d="M106.3 541.5 L108.8 537.0 L110.7 538.8 Z" stroke="none" fill="#2a2a2a" stroke-width="1" />
<text x="114" y="561" font-size="11.3" fill="#111" textLength="59" lengthAdjust="spacingAndGlyphs" >3x ¾&quot;øx2&quot;</text>
<path d="M173 565.4 H113.5 L99.6 521" stroke="#2a2a2a" fill="none" stroke-width="0.9" />
<path d="M99.6 521.0 L102.3 525.4 L99.9 526.2 Z" stroke="none" fill="#2a2a2a" stroke-width="1" />
<text x="97.5" y="592" font-size="11.5" fill="#111" font-weight="bold" textLength="17.5" lengthAdjust="spacingAndGlyphs" >RD</text>
<line x1="86" y1="596.8" x2="114.4" y2="596.8" stroke="#2a2a2a" stroke-width="1.6" />
<path d="M92.5 593.3 L85.5 596.8 L92.5 600.3" stroke="#2a2a2a" fill="none" stroke-width="1.4" />
<line x1="110.3" y1="616.7" x2="110.3" y2="639.7" stroke="#2a2a2a" stroke-width="1.1" />
<line x1="110.3" y1="631" x2="127.8" y2="631" stroke="#2a2a2a" stroke-width="1" />
<path d="M110.3 631 L118.5 628.6 V633.4 Z" stroke="none" fill="#111" stroke-width="1" />
<text x="113.5" y="651" font-size="18" fill="#2b7217" font-weight="bold" textLength="13.5" lengthAdjust="spacingAndGlyphs" >A</text>
<line x1="436.7" y1="463.8" x2="436.7" y2="499.6" stroke="#2a2a2a" stroke-width="0.9" />
<line x1="434.4" y1="466.1" x2="439.0" y2="461.5" stroke="#141414" stroke-width="1.25" />
<line x1="434.4" y1="483.90000000000003" x2="439.0" y2="479.3" stroke="#141414" stroke-width="1.25" />
<line x1="434.4" y1="501.90000000000003" x2="439.0" y2="497.3" stroke="#141414" stroke-width="1.25" />
<line x1="436.7" y1="481.6" x2="494.8" y2="481.6" stroke="#2a2a2a" stroke-width="0.9" />
<line x1="436.7" y1="499.6" x2="494.8" y2="499.6" stroke="#2a2a2a" stroke-width="0.9" />
<text x="434.5" y="479" font-size="13" fill="#1b7886" textLength="11" lengthAdjust="spacingAndGlyphs" stroke="#1b7886" stroke-width="0.25" transform="rotate(-90 434.5 479)" >3&quot;</text>
<text x="434.5" y="497" font-size="13" fill="#1b7886" textLength="11" lengthAdjust="spacingAndGlyphs" stroke="#1b7886" stroke-width="0.25" transform="rotate(-90 434.5 497)" >3&quot;</text>
<path d="M463.59999999999997 481.6 H472.2 M467.9 477.3 V485.90000000000003" stroke="#7f9fac" fill="none" stroke-width="1.7" />
<path d="M463.59999999999997 499.6 H472.2 M467.9 495.3 V503.90000000000003" stroke="#7f9fac" fill="none" stroke-width="1.7" />
<line x1="467.9" y1="390.5" x2="467.9" y2="481" stroke="#2a2a2a" stroke-width="0.9" />
<line x1="465.4" y1="390.5" x2="470.4" y2="390.5" stroke="#2a2a2a" stroke-width="0.9" />
<path d="M489.0 481.6 H497.6 M493.3 477.3 V485.90000000000003" stroke="#7f9fac" fill="none" stroke-width="1.7" />
<path d="M489.0 499.6 H497.6 M493.3 495.3 V503.90000000000003" stroke="#7f9fac" fill="none" stroke-width="1.7" />
<line x1="493.3" y1="390.5" x2="493.3" y2="481" stroke="#2a2a2a" stroke-width="0.9" />
<line x1="490.8" y1="390.5" x2="495.8" y2="390.5" stroke="#2a2a2a" stroke-width="0.9" />
<path d="M625.7 481.6 H634.3 M630 477.3 V485.90000000000003" stroke="#7f9fac" fill="none" stroke-width="1.7" />
<path d="M625.7 499.6 H634.3 M630 495.3 V503.90000000000003" stroke="#7f9fac" fill="none" stroke-width="1.7" />
<line x1="630" y1="390.5" x2="630" y2="481" stroke="#2a2a2a" stroke-width="0.9" />
<line x1="627.5" y1="390.5" x2="632.5" y2="390.5" stroke="#2a2a2a" stroke-width="0.9" />
<path d="M651.4000000000001 481.6 H660.0 M655.7 477.3 V485.90000000000003" stroke="#7f9fac" fill="none" stroke-width="1.7" />
<path d="M651.4000000000001 499.6 H660.0 M655.7 495.3 V503.90000000000003" stroke="#7f9fac" fill="none" stroke-width="1.7" />
<line x1="655.7" y1="390.5" x2="655.7" y2="481" stroke="#2a2a2a" stroke-width="0.9" />
<line x1="653.2" y1="390.5" x2="658.2" y2="390.5" stroke="#2a2a2a" stroke-width="0.9" />
<path d="M467.9 469.3 A3.2 3.2 0 0 1 472.7 471.4 A4.3 4.3 0 0 1 476.5 477.2 A5.4 5.4 0 0 1 478.6 485.6 A5.8 5.8 0 0 1 478.6 495.0 A5.4 5.4 0 0 1 476.5 503.4 A4.3 4.3 0 0 1 472.7 509.2 A3.2 3.2 0 0 1 467.9 511.3 A3.2 3.2 0 0 1 463.1 509.2 A4.3 4.3 0 0 1 459.3 503.4 A5.4 5.4 0 0 1 457.2 495.0 A5.8 5.8 0 0 1 457.2 485.6 A5.4 5.4 0 0 1 459.3 477.2 A4.3 4.3 0 0 1 463.1 471.4 A3.2 3.2 0 0 1 467.9 469.3" stroke="#c44a4a" fill="none" stroke-width="1" />
<path d="M493.3 469.3 A3.3 3.3 0 0 1 498.2 471.4 A4.4 4.4 0 0 1 502.2 477.2 A5.4 5.4 0 0 1 504.4 485.6 A5.8 5.8 0 0 1 504.4 495.0 A5.4 5.4 0 0 1 502.2 503.4 A4.4 4.4 0 0 1 498.2 509.2 A3.3 3.3 0 0 1 493.3 511.3 A3.3 3.3 0 0 1 488.4 509.2 A4.4 4.4 0 0 1 484.4 503.4 A5.4 5.4 0 0 1 482.2 495.0 A5.8 5.8 0 0 1 482.2 485.6 A5.4 5.4 0 0 1 484.4 477.2 A4.4 4.4 0 0 1 488.4 471.4 A3.3 3.3 0 0 1 493.3 469.3" stroke="#c44a4a" fill="none" stroke-width="1" />
<path d="M629.5 469.3 A3.2 3.2 0 0 1 634.3 471.4 A4.3 4.3 0 0 1 638.1 477.2 A5.4 5.4 0 0 1 640.2 485.6 A5.8 5.8 0 0 1 640.2 495.0 A5.4 5.4 0 0 1 638.1 503.4 A4.3 4.3 0 0 1 634.3 509.2 A3.2 3.2 0 0 1 629.5 511.3 A3.2 3.2 0 0 1 624.7 509.2 A4.3 4.3 0 0 1 620.9 503.4 A5.4 5.4 0 0 1 618.8 495.0 A5.8 5.8 0 0 1 618.8 485.6 A5.4 5.4 0 0 1 620.9 477.2 A4.3 4.3 0 0 1 624.7 471.4 A3.2 3.2 0 0 1 629.5 469.3" stroke="#c44a4a" fill="none" stroke-width="1" />
<path d="M655.5 469.3 A3.3 3.3 0 0 1 660.4 471.4 A4.4 4.4 0 0 1 664.4 477.2 A5.4 5.4 0 0 1 666.6 485.6 A5.8 5.8 0 0 1 666.6 495.0 A5.4 5.4 0 0 1 664.4 503.4 A4.4 4.4 0 0 1 660.4 509.2 A3.3 3.3 0 0 1 655.5 511.3 A3.3 3.3 0 0 1 650.6 509.2 A4.4 4.4 0 0 1 646.6 503.4 A5.4 5.4 0 0 1 644.4 495.0 A5.8 5.8 0 0 1 644.4 485.6 A5.4 5.4 0 0 1 646.6 477.2 A4.4 4.4 0 0 1 650.6 471.4 A3.3 3.3 0 0 1 655.5 469.3" stroke="#c44a4a" fill="none" stroke-width="1" />
<text x="473" y="386.5" font-size="12.5" fill="#1b7886" textLength="39" lengthAdjust="spacingAndGlyphs" stroke="#1b7886" stroke-width="0.1" transform="rotate(-90 473 386.5)" >5&#x27;-3¾&quot;</text>
<text x="498" y="386.5" font-size="12.5" fill="#1b7886" textLength="24" lengthAdjust="spacingAndGlyphs" stroke="#1b7886" stroke-width="0.1" transform="rotate(-90 498 386.5)" >5&#x27;-8&quot;</text>
<text x="635" y="386.5" font-size="12.5" fill="#1b7886" textLength="39" lengthAdjust="spacingAndGlyphs" stroke="#1b7886" stroke-width="0.1" transform="rotate(-90 635 386.5)" >7&#x27;-6¾&quot;</text>
<text x="660.5" y="386.5" font-size="12.5" fill="#1b7886" textLength="31" lengthAdjust="spacingAndGlyphs" stroke="#1b7886" stroke-width="0.1" transform="rotate(-90 660.5 386.5)" >7&#x27;-11&quot;</text>
<line x1="638" y1="481.6" x2="689" y2="481.6" stroke="#2a2a2a" stroke-width="0.9" />
<line x1="638" y1="499.6" x2="689" y2="499.6" stroke="#2a2a2a" stroke-width="0.9" />
<line x1="688" y1="463.8" x2="688" y2="499.6" stroke="#555" stroke-width="1" />
<line x1="685.7" y1="466.1" x2="690.3" y2="461.5" stroke="#141414" stroke-width="1.25" />
<line x1="685.7" y1="483.90000000000003" x2="690.3" y2="479.3" stroke="#141414" stroke-width="1.25" />
<line x1="685.7" y1="501.90000000000003" x2="690.3" y2="497.3" stroke="#141414" stroke-width="1.25" />
<text x="685.5" y="478.5" font-size="13" fill="#1b7886" textLength="11" lengthAdjust="spacingAndGlyphs" stroke="#1b7886" stroke-width="0.25" transform="rotate(-90 685.5 478.5)" >3&quot;</text>
<text x="685.5" y="496.5" font-size="13" fill="#1b7886" textLength="11" lengthAdjust="spacingAndGlyphs" stroke="#1b7886" stroke-width="0.25" transform="rotate(-90 685.5 496.5)" >3&quot;</text>
<circle cx="680.7" cy="471.8" r="11" stroke="#c44a4a" fill="none" stroke-width="1" />
<circle cx="680.7" cy="491" r="11" stroke="#c44a4a" fill="none" stroke-width="1" />
<rect x="905.7" y="471.9" width="21.5" height="54.3" fill="none" stroke="#aebfc6" stroke-width="1"/>
<line x1="930" y1="472" x2="930" y2="526" stroke="#a87c7c" stroke-width="1.8" />
<line x1="927.3" y1="478" x2="927.3" y2="526" stroke="#58a070" stroke-width="1" stroke-dasharray="3 2"/>
<circle cx="919" cy="481.2" r="4.3" stroke="#7c9fb0" fill="#e6eef2" stroke-width="1.2" />
<circle cx="919" cy="481.2" r="2.3" stroke="#7c9fb0" fill="#f4f8fa" stroke-width="1" />
<circle cx="919" cy="481.2" r="0.8" stroke="none" fill="#7c9fb0" stroke-width="1" />
<circle cx="919" cy="499.6" r="4.3" stroke="#7c9fb0" fill="#e6eef2" stroke-width="1.2" />
<circle cx="919" cy="499.6" r="2.3" stroke="#7c9fb0" fill="#f4f8fa" stroke-width="1" />
<circle cx="919" cy="499.6" r="0.8" stroke="none" fill="#7c9fb0" stroke-width="1" />
<circle cx="919" cy="517.8" r="4.3" stroke="#7c9fb0" fill="#e6eef2" stroke-width="1.2" />
<circle cx="919" cy="517.8" r="2.3" stroke="#7c9fb0" fill="#f4f8fa" stroke-width="1" />
<circle cx="919" cy="517.8" r="0.8" stroke="none" fill="#7c9fb0" stroke-width="1" />
<line x1="937.6" y1="481" x2="982.7" y2="481" stroke="#2a2a2a" stroke-width="0.9" />
<line x1="978.9000000000001" y1="483.3" x2="983.5" y2="478.7" stroke="#141414" stroke-width="1.25" />
<line x1="937.6" y1="499.6" x2="982.7" y2="499.6" stroke="#2a2a2a" stroke-width="0.9" />
<line x1="978.9000000000001" y1="501.90000000000003" x2="983.5" y2="497.3" stroke="#141414" stroke-width="1.25" />
<line x1="937.6" y1="517.8" x2="982.7" y2="517.8" stroke="#2a2a2a" stroke-width="0.9" />
<line x1="978.9000000000001" y1="520.0999999999999" x2="983.5" y2="515.5" stroke="#141414" stroke-width="1.25" />
<line x1="929" y1="463.6" x2="982.7" y2="463.6" stroke="#2a2a2a" stroke-width="1" />
<line x1="978.9000000000001" y1="465.90000000000003" x2="983.5" y2="461.3" stroke="#141414" stroke-width="1.25" />
<line x1="981.2" y1="463.6" x2="981.2" y2="517.8" stroke="#4a3a3a" stroke-width="1" />
<text x="977" y="478.5" font-size="13" fill="#1b7886" textLength="11" lengthAdjust="spacingAndGlyphs" stroke="#1b7886" stroke-width="0.25" transform="rotate(-90 977 478.5)" >3&quot;</text>
<text x="977" y="496.5" font-size="13" fill="#1b7886" textLength="11" lengthAdjust="spacingAndGlyphs" stroke="#1b7886" stroke-width="0.25" transform="rotate(-90 977 496.5)" >3&quot;</text>
<text x="977" y="514.5" font-size="13" fill="#1b7886" textLength="11" lengthAdjust="spacingAndGlyphs" stroke="#1b7886" stroke-width="0.25" transform="rotate(-90 977 514.5)" >3&quot;</text>
<line x1="935.6" y1="467.9" x2="955.5" y2="467.9" stroke="#444" stroke-width="1.1" />
<line x1="952.0" y1="465.8" x2="956.4000000000001" y2="461.40000000000003" stroke="#141414" stroke-width="1.25" />
<line x1="952.0" y1="470.09999999999997" x2="956.4000000000001" y2="465.7" stroke="#141414" stroke-width="1.25" />
<text x="950.5" y="483.5" font-size="10" fill="#3f8fa1" textLength="12.5" lengthAdjust="spacingAndGlyphs" stroke="#3f8fa1" stroke-width="0.1" transform="rotate(-90 950.5 483.5)" >¾&quot;</text>
<line x1="935.6" y1="541" x2="955.6" y2="541" stroke="#2a2a2a" stroke-width="0.9" />
<line x1="917.8" y1="545" x2="955.6" y2="545" stroke="#2a2a2a" stroke-width="0.9" />
<line x1="952.1999999999999" y1="543.2" x2="956.6" y2="538.8" stroke="#141414" stroke-width="1.25" />
<line x1="952.1999999999999" y1="547.2" x2="956.6" y2="542.8" stroke="#141414" stroke-width="1.25" />
<text x="950.5" y="563" font-size="10" fill="#3f8fa1" textLength="12.5" lengthAdjust="spacingAndGlyphs" stroke="#3f8fa1" stroke-width="0.1" transform="rotate(-90 950.5 563)" >¾&quot;</text>
<text x="912" y="569.5" font-size="12.5" fill="#1b7886" textLength="12" lengthAdjust="spacingAndGlyphs" stroke="#1b7886" stroke-width="0.1" >3&quot;</text>
<line x1="906.5" y1="571.8" x2="929" y2="571.8" stroke="#2a2a2a" stroke-width="0.9" />
<line x1="906.1999999999999" y1="574.0" x2="910.6" y2="569.5999999999999" stroke="#141414" stroke-width="1.25" />
<line x1="924.5" y1="574.0" x2="928.9000000000001" y2="569.5999999999999" stroke="#141414" stroke-width="1.25" />
<line x1="908.4" y1="554.5" x2="908.4" y2="575" stroke="#2a2a2a" stroke-width="0.9" />
<line x1="926.7" y1="545" x2="926.7" y2="575" stroke="#2a2a2a" stroke-width="0.9" />
<line x1="920" y1="343.8" x2="920" y2="392.5" stroke="#2a2a2a" stroke-width="0.9" />
<line x1="917.5" y1="343.8" x2="922.5" y2="343.8" stroke="#2a2a2a" stroke-width="0.9" />
<line x1="917.5" y1="392.5" x2="922.5" y2="392.5" stroke="#2a2a2a" stroke-width="0.9" />
<line x1="920" y1="408.8" x2="920" y2="436" stroke="#222" stroke-width="1.2" />
<line x1="919.7" y1="436" x2="919.7" y2="472" stroke="#222" stroke-width="1.1" />
<line x1="927.6" y1="408.8" x2="927.6" y2="463.6" stroke="#333" stroke-width="1" />
<text x="924.5" y="340" font-size="13" fill="#1b7886" textLength="30" lengthAdjust="spacingAndGlyphs" stroke="#1b7886" stroke-width="0.1" transform="rotate(-90 924.5 340)" >11&#x27;-7&quot;</text>
<text x="924.5" y="388" font-size="13" fill="#1b7886" textLength="31.5" lengthAdjust="spacingAndGlyphs" stroke="#1b7886" stroke-width="0.1" transform="rotate(-90 924.5 388)" >11&#x27;-7&quot;</text>
<text x="910.5" y="406" font-size="10" fill="#3f8fa1" textLength="14" lengthAdjust="spacingAndGlyphs" stroke="#3f8fa1" stroke-width="0.1" >½&quot;</text>
<line x1="925.8" y1="411.0" x2="930.2" y2="406.6" stroke="#141414" stroke-width="1.25" />
<line x1="928.0999999999999" y1="411.0" x2="932.5" y2="406.6" stroke="#141414" stroke-width="1.25" />
<text x="912" y="433" font-size="12.5" fill="#1b7886" textLength="11.5" lengthAdjust="spacingAndGlyphs" stroke="#1b7886" stroke-width="0.1" >3&quot;</text>
<line x1="906" y1="435.5" x2="930.3" y2="435.5" stroke="#2a2a2a" stroke-width="0.9" />
<line x1="906.5" y1="437.7" x2="910.9000000000001" y2="433.3" stroke="#141414" stroke-width="1.25" />
<line x1="928.0999999999999" y1="437.7" x2="932.5" y2="433.3" stroke="#141414" stroke-width="1.25" />
<line x1="908.7" y1="433" x2="908.7" y2="455" stroke="#2a2a2a" stroke-width="0.9" />
<text x="842.6" y="454" font-size="10.2" fill="#111" textLength="61" lengthAdjust="spacingAndGlyphs" >m1000 B/S</text>
<path d="M842.6 457.2 H903.7 L917 471.9" stroke="#2a2a2a" fill="none" stroke-width="0.9" />
<path d="M917.0 471.9 L912.7 469.1 L914.6 467.3 Z" stroke="none" fill="#2a2a2a" stroke-width="1" />
<text x="941" y="451.3" font-size="11.3" fill="#111" textLength="59.7" lengthAdjust="spacingAndGlyphs" >3x ¾&quot;øx2&quot;</text>
<path d="M1000.7 455.3 H941 L923.6 480.5" stroke="#2a2a2a" fill="none" stroke-width="0.9" />
<path d="M923.6 480.5 L925.4 475.6 L927.5 477.1 Z" stroke="none" fill="#2a2a2a" stroke-width="1" />
<text x="859.5" y="484.5" font-size="12.5" fill="#1a7088" font-weight="bold" textLength="34" lengthAdjust="spacingAndGlyphs" >R=½&quot;</text>
<path d="M857.8 486.9 H895.6 L907.8 467.8" stroke="#2a2a2a" fill="none" stroke-width="0.9" />
<path d="M907.8 467.8 L906.2 472.7 L904.0 471.3 Z" stroke="none" fill="#2a2a2a" stroke-width="1" />
<text x="860" y="520" font-size="12.5" fill="#1a7088" font-weight="bold" textLength="33.5" lengthAdjust="spacingAndGlyphs" >R=½&quot;</text>
<path d="M857.8 522.7 H895.6 L909.3 540.4" stroke="#2a2a2a" fill="none" stroke-width="0.9" />
<path d="M909.3 540.4 L905.2 537.2 L907.3 535.7 Z" stroke="none" fill="#2a2a2a" stroke-width="1" />
<line x1="937.7" y1="592.8" x2="937.7" y2="614.2" stroke="#2a2a2a" stroke-width="1.1" />
<line x1="937.7" y1="606" x2="954.6" y2="606" stroke="#2a2a2a" stroke-width="1" />
<path d="M937.7 606 L946 603.6 V608.4 Z" stroke="none" fill="#111" stroke-width="1" />
<text x="943.5" y="625.2" font-size="18" fill="#2b7217" font-weight="bold" textLength="12" lengthAdjust="spacingAndGlyphs" >B</text>
<line x1="1012.5" y1="143" x2="1012.5" y2="146" stroke="#bbb" stroke-width="1" />
</g>
<rect x="16" y="43" width="27.5" height="21" fill="#e6e6ec" />
<rect x="16" y="42.8" width="27.5" height="1" fill="#474747" />
<rect x="16" y="43.8" width="27.5" height="1.5" fill="#fbfbfb" />
<rect x="16" y="45.3" width="27.5" height="2" fill="#b2b2b6" />
<rect x="16" y="59.8" width="27.5" height="1.8" fill="#b2b2b6" />
<rect x="16" y="61.6" width="27.5" height="1.7" fill="#fbfbfb" />
<rect x="16" y="63.3" width="27.5" height="1" fill="#474747" />
<text x="24.3" y="58.3" font-size="8.5" fill="#bf642c" textLength="15.5" lengthAdjust="spacingAndGlyphs" >1000</text>
<path d="M70 47 L78 42.5 L82 45 L74 50 Z" stroke="none" fill="#f2f2f2" stroke-width="1" />
<path d="M70 47 L74 50 V53 L70 50 Z" stroke="none" fill="#e58a2c" stroke-width="1" />
<path d="M74 50 L82 45 V48 L74 53 Z" stroke="none" fill="#c7c7c7" stroke-width="1" />
<rect x="71" y="66.5" width="11.5" height="9" fill="#e3e3e3" />
<rect x="69.5" y="64" width="2" height="11.5" fill="#3a3a4a" />
<path d="M75.5 62.5 L81 68.5 M81 62.5 L75.5 68.5" stroke="#e03a2a" fill="none" stroke-width="2" />
<text x="69.5" y="65" font-size="5" fill="#e58a5a" font-weight="bold" >99</text>
<rect x="69.5" y="86" width="13" height="9" fill="#e3e3e3" />
<rect x="69.5" y="86" width="13" height="2.3" fill="#8c8c8c" />
<path d="M76 88 L81.5 94 M81.5 88 L76 94" stroke="#e03a2a" fill="none" stroke-width="2" />
<rect x="99.5" y="43" width="13.5" height="10" fill="#d9d9d9" />
<rect x="99.5" y="43" width="13.5" height="2.2" fill="#8e8e8e" />
<rect x="99.5" y="51" width="13.5" height="2" fill="#8e8e8e" />
<text x="100.5" y="50.5" font-size="5" fill="#d8431e" font-weight="bold" textLength="11.5" lengthAdjust="spacingAndGlyphs" >1000</text>
<path d="M100.5 62.5 H111.5 M100.5 75.5 H111.5 M103 62.5 V75.5 M109 62.5 V75.5" stroke="#e4e4e4" fill="none" stroke-width="1.6" />
<text x="99.3" y="89.8" font-size="7.5" fill="#dedede" font-weight="bold" >2</text>
<text x="108.4" y="89.8" font-size="7.5" fill="#dedede" font-weight="bold" >2</text>
<text x="99.3" y="97" font-size="7.5" fill="#dedede" font-weight="bold" >3</text>
<text x="108.4" y="97" font-size="7.5" fill="#dedede" font-weight="bold" >3</text>
<text x="103.6" y="89.3" font-size="7" fill="#e9a85c" font-weight="bold" >=</text>
<text x="103.6" y="96.5" font-size="7" fill="#e9a85c" font-weight="bold" >=</text>
<rect x="119" y="43" width="13.5" height="9" fill="#d9d9d9" />
<rect x="119" y="43" width="13.5" height="2" fill="#8e8e8e" />
<text x="120" y="49.5" font-size="4.5" fill="#d8431e" font-weight="bold" textLength="9" lengthAdjust="spacingAndGlyphs" >1100</text>
<rect x="126.5" y="48" width="6.5" height="5.5" fill="#f3f3f3" stroke="#666" stroke-width="0.7"/>
<rect x="119.5" y="62.5" width="2.5" height="13" fill="#e9e9e9" />
<rect x="123" y="64.5" width="9.5" height="10.5" fill="#f0a45e" />
<rect x="119.2" y="83.5" width="6" height="6" fill="#f0a45e" />
<text x="120.7" y="88.8" font-size="6" fill="#6b3a12" font-weight="bold" >1</text>
<rect x="126.0" y="83.5" width="6" height="6" fill="#f0a45e" />
<text x="127.5" y="88.8" font-size="6" fill="#6b3a12" font-weight="bold" >2</text>
<rect x="119.2" y="90.3" width="6" height="6" fill="#f0a45e" />
<text x="120.7" y="95.6" font-size="6" fill="#6b3a12" font-weight="bold" >3</text>
<rect x="126.0" y="90.3" width="6" height="6" fill="#f0a45e" />
<text x="127.5" y="95.6" font-size="6" fill="#6b3a12" font-weight="bold" >4</text>
<text x="149.8" y="46.7" font-size="7" fill="#dcdcdc" font-weight="bold" >3</text>
<text x="160.3" y="46.7" font-size="7" fill="#dcdcdc" font-weight="bold" >3</text>
<text x="153.3" y="54.2" font-size="13" fill="#dc9468" >?</text>
<text x="149.8" y="67.7" font-size="7" fill="#dcdcdc" font-weight="bold" >3</text>
<text x="160.3" y="67.7" font-size="7" fill="#dcdcdc" font-weight="bold" >3</text>
<text x="153.3" y="75.2" font-size="13" fill="#dc9468" >?</text>
<text x="149.5" y="73" font-size="6.5" fill="#e9a85c" font-weight="bold" >=</text>
<text x="149.8" y="88.7" font-size="7" fill="#dcdcdc" font-weight="bold" >3</text>
<text x="160.3" y="88.7" font-size="7" fill="#dcdcdc" font-weight="bold" >3</text>
<text x="153.3" y="96.2" font-size="13" fill="#dc9468" >?</text>
<text x="149.5" y="94" font-size="6.5" fill="#e9a85c" font-weight="bold" >≠</text>
<path d="M181.5 42.5 H186.5 M181.5 54 H186.5 M184 42.5 V54" stroke="#e6e6e6" fill="none" stroke-width="1.4" />
<rect x="186.5" y="44" width="8" height="7" fill="#d34a4a" />
<rect x="181" y="63.5" width="1.6" height="13" fill="#e9e9e9" />
<rect x="182.5" y="71" width="11.5" height="3.6" fill="#e9e9e9" />
<path d="M184 70.5 V64.5 H188 L193 70.5 Z" stroke="none" fill="#d86a6a" stroke-width="1" />
<text x="181" y="88.5" font-size="6.5" fill="#e9a85c" font-weight="bold" >0</text>
<text x="189.5" y="88.5" font-size="6.5" fill="#e9a85c" font-weight="bold" >2</text>
<path d="M181 90.5 H185.5 M181 96.5 H185.5 M183.2 90.5 V96.5" stroke="#e05050" fill="none" stroke-width="1.8" />
<path d="M189.5 90.5 H194 M189.5 96.5 H194 M191.7 90.5 V96.5" stroke="#e8e8e8" fill="none" stroke-width="1.4" />
<path d="M214 62 V43.5 H221 L223 45.5 H233 V48" stroke="none" fill="#d4d4d4" stroke-width="1" />
<path d="M214 62 V43.5 H221 L223 45.5 H233 V62 Z" stroke="none" fill="#cfcfcf" stroke-width="1" />
<path d="M218.5 48.5 H234.5 L239 53 V65.5 H218.5 Z" stroke="#777" fill="#efefef" stroke-width="0.8" />
<rect x="221" y="52" width="14" height="3" fill="#fff" stroke="#777" stroke-width="0.8"/>
<rect x="221" y="57" width="5.5" height="6.5" fill="#fff" stroke="#777" stroke-width="0.8"/>
<rect x="228.5" y="57" width="6.5" height="6.5" fill="#fff" stroke="#777" stroke-width="0.8"/>
<path d="M265 42.5 H273.5 L276.5 45.5 V52.5 H265 Z" stroke="#8d8d8d" fill="#e3e3e3" stroke-width="0.6" />
<rect x="266.5" y="44.2" width="6.5" height="2.2" fill="#f7f7f7" stroke="#8d8d8d" stroke-width="0.5"/>
<rect x="266.5" y="47.7" width="3" height="3.2" fill="#f7f7f7" stroke="#8d8d8d" stroke-width="0.5"/>
<rect x="270.5" y="47.7" width="3.5" height="3.2" fill="#f7f7f7" stroke="#8d8d8d" stroke-width="0.5"/>
<path d="M272.5 51 H278.5 M275.5 48 V54" stroke="#2fb34a" fill="none" stroke-width="2.6" />
<path d="M285 42.5 H293.5 L296.5 45.5 V52.5 H285 Z" stroke="#8d8d8d" fill="#e3e3e3" stroke-width="0.6" />
<rect x="286.5" y="44.2" width="6.5" height="2.2" fill="#f7f7f7" stroke="#8d8d8d" stroke-width="0.5"/>
<rect x="286.5" y="47.7" width="3" height="3.2" fill="#f7f7f7" stroke="#8d8d8d" stroke-width="0.5"/>
<rect x="290.5" y="47.7" width="3.5" height="3.2" fill="#f7f7f7" stroke="#8d8d8d" stroke-width="0.5"/>
<rect x="292.5" y="50.5" width="6.5" height="2.6" fill="#c9403a" />
<path d="M265 63.5 H273.5 L276.5 66.5 V73.5 H265 Z" stroke="#8d8d8d" fill="#e3e3e3" stroke-width="0.6" />
<rect x="266.5" y="65.2" width="6.5" height="2.2" fill="#f7f7f7" stroke="#8d8d8d" stroke-width="0.5"/>
<rect x="266.5" y="68.7" width="3" height="3.2" fill="#f7f7f7" stroke="#8d8d8d" stroke-width="0.5"/>
<rect x="270.5" y="68.7" width="3.5" height="3.2" fill="#f7f7f7" stroke="#8d8d8d" stroke-width="0.5"/>
<path d="M271 74.5 L277.5 67 L279.3 68.7 L272.8 76 Z" stroke="none" fill="#e8c64a" stroke-width="1" />
<path d="M271 74.5 L272.8 76 L270.3 76.8 Z" stroke="none" fill="#6b4a2a" stroke-width="1" />
<path d="M285 63.5 H293.5 L296.5 66.5 V73.5 H285 Z" stroke="#8d8d8d" fill="#e3e3e3" stroke-width="0.6" />
<rect x="286.5" y="65.2" width="6.5" height="2.2" fill="#f7f7f7" stroke="#8d8d8d" stroke-width="0.5"/>
<rect x="286.5" y="68.7" width="3" height="3.2" fill="#f7f7f7" stroke="#8d8d8d" stroke-width="0.5"/>
<rect x="290.5" y="68.7" width="3.5" height="3.2" fill="#f7f7f7" stroke="#8d8d8d" stroke-width="0.5"/>
<path d="M288 70 L292.5 74.5 M292.5 70 L288 74.5" stroke="#e0432a" fill="none" stroke-width="1.7" />
<path d="M265 85 H271 V92 H265 Z" stroke="#8d8d8d" fill="#d6d6d6" stroke-width="0.6" />
<path d="M268 87.5 H274.5 V94.5 H268 Z" stroke="#8d8d8d" fill="#e6e6e6" stroke-width="0.6" />
<path d="M271 90 H277.5 V96 H271 Z" stroke="#8d8d8d" fill="#cfcfcf" stroke-width="0.6" />
<path d="M284 84.5 H292.5 L295.5 87.5 V94.5 H284 Z" stroke="#8d8d8d" fill="#e3e3e3" stroke-width="0.6" />
<rect x="285.5" y="86.2" width="6.5" height="2.2" fill="#f7f7f7" stroke="#8d8d8d" stroke-width="0.5"/>
<rect x="285.5" y="89.7" width="3" height="3.2" fill="#f7f7f7" stroke="#8d8d8d" stroke-width="0.5"/>
<rect x="289.5" y="89.7" width="3.5" height="3.2" fill="#f7f7f7" stroke="#8d8d8d" stroke-width="0.5"/>
<rect x="293" y="84.5" width="4.8" height="4.8" fill="#e9e9e9" stroke="#8d8d8d" stroke-width="0.6"/>
<circle cx="294.5" cy="95.2" r="1.6" stroke="#e9e9e9" fill="#666" stroke-width="0.6" />
<path d="M315 42.5 H322.5 L326 46.0 V54.0 H315 Z" stroke="none" fill="#ececec" stroke-width="1" />
<path d="M322.5 42.5 V46.0 H326 Z" stroke="none" fill="#b5b5b5" stroke-width="1" />
<rect x="316.5" y="44" width="4" height="2.5" fill="#3f5fa8" />
<rect x="316.5" y="48" width="7" height="1" fill="#999" />
<rect x="316.5" y="50" width="7" height="1" fill="#999" />
<path d="M320 54 L327 46.5 L328.6 48 L321.6 55.6 Z" stroke="none" fill="#e8c64a" stroke-width="1" />
<path d="M315.5 63.5 H320 V72 H315.5 Z M318.5 65.5 H323.5 V74.5 H318.5 Z" stroke="#8d8d8d" fill="#e0e0e0" stroke-width="0.6" />
<path d="M319.5 76 L326.5 68.5 L328.2 70 L321.2 77.6 Z" stroke="none" fill="#b8713a" stroke-width="1" />
<path d="M326.5 68.5 L328 66.3 L329.8 68 L328.2 70 Z" stroke="none" fill="#e6cfa8" stroke-width="1" />
<path d="M315 85 H324.5 L327.5 88 V96.5 H315 Z" stroke="#7d8ea8" fill="#dfe7f2" stroke-width="0.7" />
<rect x="316.8" y="87" width="5" height="2.2" fill="#4a78c0" />
<rect x="316.8" y="91" width="3.5" height="3.5" fill="#f8f8f8" stroke="#7d8ea8" stroke-width="0.5"/>
<rect x="321.5" y="91" width="4" height="3.5" fill="#f8f8f8" stroke="#7d8ea8" stroke-width="0.5"/>
<path d="M344 45.5 H364 L369 50.5 V66.5 H344 Z" stroke="#7a7a7a" fill="#e4e4e4" stroke-width="0.8" />
<rect x="346.5" y="49" width="16" height="4" fill="#f8f8f8" stroke="#8a8a8a" stroke-width="0.7"/>
<rect x="346.5" y="55.5" width="6" height="6.5" fill="#f8f8f8" stroke="#8a8a8a" stroke-width="0.7"/>
<rect x="354.5" y="55.5" width="7" height="6.5" fill="#f8f8f8" stroke="#8a8a8a" stroke-width="0.7"/>
<path d="M389 45.5 H409 L414 50.5 V66.5 H389 Z" stroke="#7a7a7a" fill="#e4e4e4" stroke-width="0.8" />
<rect x="391.5" y="49" width="16" height="4" fill="#f8f8f8" stroke="#8a8a8a" stroke-width="0.7"/>
<rect x="391.5" y="55.5" width="6" height="6.5" fill="#f8f8f8" stroke="#8a8a8a" stroke-width="0.7"/>
<rect x="399.5" y="55.5" width="7" height="6.5" fill="#f8f8f8" stroke="#8a8a8a" stroke-width="0.7"/>
<path d="M360.5 64 L369.5 53.5 L371.8 55.5 L363 66 Z" stroke="none" fill="#c9803f" stroke-width="1" />
<path d="M356.5 69.5 Q356.8 65 360.5 63.2 L363.5 66 Q361.5 69.5 356.5 69.5 Z" stroke="none" fill="#6b4424" stroke-width="1" />
<path d="M369.5 53.5 L371 51.8 L373.3 53.8 L371.8 55.5 Z" stroke="none" fill="#e2a868" stroke-width="1" />
<circle cx="408.5" cy="61" r="4.6" stroke="#4a4a4a" fill="#8a8a8a" stroke-width="2" stroke-dasharray="2.2 1.2"/>
<circle cx="408.5" cy="61" r="3.6" stroke="none" fill="#7a7a7a" stroke-width="1" />
<circle cx="408.5" cy="61" r="1.6" stroke="none" fill="#cfcfcf" stroke-width="1" />
<path d="M441.5 42 H457 L462 47 V66.5 H441.5 Z" stroke="#7a7a7a" fill="#f1f1f1" stroke-width="0.8" />
<rect x="444" y="45" width="3" height="3" fill="#3f66b8" />
<rect x="448.5" y="45" width="9" height="1.2" fill="#3f66b8" />
<rect x="448.5" y="47.5" width="7" height="1.2" fill="#6d8fd0" />
<rect x="444" y="52" width="4" height="1.8" fill="#9fb0c8" />
<rect x="449.5" y="52" width="4" height="1.8" fill="#9fb0c8" />
<rect x="455" y="52" width="4" height="1.8" fill="#9fb0c8" />
<rect x="444" y="55.5" width="4" height="1.8" fill="#9fb0c8" />
<rect x="449.5" y="55.5" width="4" height="1.8" fill="#9fb0c8" />
<rect x="455" y="55.5" width="4" height="1.8" fill="#9fb0c8" />
<rect x="444" y="59" width="4" height="1.8" fill="#9fb0c8" />
<rect x="449.5" y="59" width="4" height="1.8" fill="#9fb0c8" />
<rect x="455" y="59" width="4" height="1.8" fill="#9fb0c8" />
<path d="M454 65 L463 54.5 L465.3 56.5 L456.5 67 Z" stroke="none" fill="#c9803f" stroke-width="1" />
<path d="M450 70.5 Q450.3 66 454 64.2 L457 67 Q455 70.5 450 70.5 Z" stroke="none" fill="#6b4424" stroke-width="1" />
<path d="M463 54.5 L464.5 52.8 L466.8 54.8 L465.3 56.5 Z" stroke="none" fill="#e2a868" stroke-width="1" />
<path d="M494.5 41 H491.5 V62.5 H494.5" stroke="#d9d9d9" fill="none" stroke-width="1.6" />
<path d="M508 41 H511 V50" stroke="#d9d9d9" fill="none" stroke-width="1.6" />
<rect x="495.5" y="44" width="9.5" height="8.5" fill="#5c8fc2" stroke="#b9cde0" stroke-width="0.8"/>
<circle cx="499" cy="58.5" r="3.6" stroke="none" fill="#bdbdbd" stroke-width="1" />
<rect x="501.5" y="52.5" width="16" height="14" fill="#f1f1f1" stroke="#777" stroke-width="0.7"/>
<rect x="501.5" y="52.5" width="16" height="3" fill="#cfcfcf" />
<rect x="504" y="59" width="2.5" height="2" fill="#666" />
<rect x="508" y="59" width="7" height="2" fill="#666" />
<rect x="504" y="62.5" width="2.5" height="1.6" fill="#666" />
<rect x="508" y="62.5" width="7" height="1.6" fill="#666" />
<rect x="527.5" y="80.8" width="18.8" height="17.4" fill="#557cb6" stroke="#8aa8d4" stroke-width="1"/>
<path d="M533.5 42 H531.5 V54 H533.5 M540 42 H542 V54 H540" stroke="#d5d5d5" fill="none" stroke-width="1.1" />
<rect x="533.5" y="43.5" width="5" height="4" fill="#6ea0d8" />
<circle cx="536" cy="51" r="2" stroke="none" fill="#b8b8b8" stroke-width="1" />
<path d="M533.5 63 H531.5 V75 H533.5 M540 63 H542 V75 H540" stroke="#d5d5d5" fill="none" stroke-width="1.1" />
<rect x="533.5" y="64.5" width="5" height="4" fill="#6ea0d8" />
<circle cx="536" cy="72" r="2" stroke="none" fill="#b8b8b8" stroke-width="1" />
<path d="M533.5 84 H531.5 V96 H533.5 M540 84 H542 V96 H540" stroke="#d5d5d5" fill="none" stroke-width="1.1" />
<rect x="533.5" y="85.5" width="5" height="4" fill="#8fd0a0" />
<circle cx="536" cy="93" r="2" stroke="none" fill="#b8b8b8" stroke-width="1" />
<path d="M540 44 L545 50 M545 44 L540 50" stroke="#e04040" fill="none" stroke-width="1.4" />
<path d="M539 74.5 L544.5 67.5 L546 69 L540.5 76 Z" stroke="none" fill="#e9a04a" stroke-width="1" />
<path d="M538.5 88 V97 L541 94.8 L542.8 98.5 L544.2 97.8 L542.5 94.2 L545.5 94 Z" stroke="#335" fill="#fff" stroke-width="0.6" />
<rect x="560" y="42.5" width="13.5" height="12" fill="#f3f3f3" stroke="#8a8a8a" stroke-width="0.6"/>
<circle cx="563.8" cy="46.5" r="1.6" stroke="none" fill="#444" stroke-width="1" />
<rect x="561.8" y="49" width="4" height="2.5" fill="#444" />
<rect x="567.5" y="45" width="4.5" height="1.1" fill="#444" />
<rect x="567.5" y="47.5" width="4.5" height="1.1" fill="#444" />
<rect x="561.8" y="52.3" width="10" height="1" fill="#444" />
<text x="560" y="69.5" font-size="7" fill="#f0f0f0" font-weight="bold" >A</text>
<text x="560" y="77" font-size="7" fill="#f0f0f0" font-weight="bold" >Z</text>
<path d="M569.5 65.5 V72.5 M567.5 70.5 L569.5 73.2 L571.5 70.5" stroke="#4aa0f0" fill="none" stroke-width="1.6" />
<path d="M699 42 H713.5 L718 46.5 V66 H699 Z" stroke="#7a7a7a" fill="#f1f1f1" stroke-width="0.8" />
<rect x="701.5" y="45" width="3" height="3" fill="#3f66b8" />
<rect x="706" y="45" width="8" height="1.2" fill="#3f66b8" />
<rect x="706" y="47.5" width="6" height="1.2" fill="#6d8fd0" />
<rect x="701.5" y="52.5" width="3.8" height="1.7" fill="#a9b6c8" />
<rect x="706.5" y="52.5" width="3.8" height="1.7" fill="#a9b6c8" />
<rect x="711.5" y="52.5" width="3.8" height="1.7" fill="#a9b6c8" />
<rect x="701.5" y="56" width="3.8" height="1.7" fill="#a9b6c8" />
<rect x="706.5" y="56" width="3.8" height="1.7" fill="#a9b6c8" />
<rect x="711.5" y="56" width="3.8" height="1.7" fill="#a9b6c8" />
<rect x="701.5" y="59.5" width="3.8" height="1.7" fill="#a9b6c8" />
<rect x="706.5" y="59.5" width="3.8" height="1.7" fill="#a9b6c8" />
<rect x="711.5" y="59.5" width="3.8" height="1.7" fill="#a9b6c8" />
<rect x="701.5" y="63" width="3.8" height="1.7" fill="#a9b6c8" />
<rect x="706.5" y="63" width="3.8" height="1.7" fill="#a9b6c8" />
<rect x="711.5" y="63" width="3.8" height="1.7" fill="#a9b6c8" />
<rect x="734" y="43.5" width="11" height="8.5" fill="#e8e8e8" stroke="#999" stroke-width="0.6"/>
<text x="735" y="50.5" font-size="6.5" fill="#222" font-weight="bold" textLength="9" lengthAdjust="spacingAndGlyphs" >NC</text>
<text x="733" y="67" font-size="6.5" fill="#e8e8e8" font-weight="bold" textLength="12.5" lengthAdjust="spacingAndGlyphs" >DXF</text>
<path d="M734 73.5 L739 69 L741 71 L745 69.5 V74 H734 Z" stroke="none" fill="#d8d8d8" stroke-width="1" />
<path d="M734 84 H740.5 L744 87.5 V96 H734 Z" stroke="none" fill="#dcdcdc" stroke-width="1" />
<path d="M740.5 84 V87.5 H744 Z" stroke="none" fill="#b5b5b5" stroke-width="1" />
<text x="734.5" y="91" font-size="5" fill="#555" font-weight="bold" >NC</text>
<circle cx="742.5" cy="93.5" r="2.6" stroke="#555" fill="#ddd" stroke-width="0.8" />
<rect x="762.5" y="42" width="13.5" height="12.5" fill="#e4e9ee" stroke="#9aa" stroke-width="0.6"/>
<path d="M764 52 L769 46 L772 50 L775 45" stroke="#456" fill="none" stroke-width="1" />
<text x="763.5" y="48.5" font-size="5" fill="#234" font-weight="bold" >MB</text>
<rect x="782.5" y="42" width="13.5" height="12.5" fill="#181818" />
<text x="783.5" y="52.5" font-size="11.5" fill="#fff" font-weight="bold" font-style="italic" textLength="11.5" lengthAdjust="spacingAndGlyphs" >M</text>
<rect x="782.5" y="42" width="2" height="12.5" fill="#c22" />
<rect x="762.5" y="63" width="13.5" height="12.5" fill="#f4f4f4" stroke="#99a" stroke-width="0.6"/>
<text x="763.2" y="70.5" font-size="6" fill="#23338a" font-weight="bold" textLength="12" lengthAdjust="spacingAndGlyphs" >CAM</text>
<path d="M763.5 73 H767 L768.5 71 L770 74 L771.5 73 H775.5" stroke="#d22" fill="none" stroke-width="0.9" />
<rect x="782.5" y="63" width="13.5" height="12.5" fill="#d8301e" />
<path d="M784.5 73 L787 66 H790.5 L788 73 Z M790.5 73 L792.5 68 H791 L791.5 66 H795.5 L793 73 Z" stroke="none" fill="#161616" stroke-width="1" />
<rect x="762.5" y="84" width="13.5" height="12.5" fill="#1f2fbf" />
<text x="764.5" y="90.5" font-size="6.5" fill="#9ab0ff" font-weight="bold" textLength="9" lengthAdjust="spacingAndGlyphs" >HI</text>
<text x="763.5" y="95.5" font-size="3.6" fill="#9ab0ff" textLength="11.5" lengthAdjust="spacingAndGlyphs" >SPAN</text>
<rect x="782.5" y="84" width="13.5" height="12.5" fill="#f1f1f1" />
<path d="M784.5 91 L789 86 L791.5 88 L787 93 Z" stroke="none" fill="#d8304a" stroke-width="1" />
<path d="M788 94 L792.5 89 L795 91 L790.5 96 Z" stroke="none" fill="#d8304a" stroke-width="1" />
<path d="M785.5 95 L787 93.3 L789 95 Z" stroke="none" fill="#3a9a50" stroke-width="1" />
<rect x="812.5" y="41" width="15" height="9" fill="#fbfbfb" />
<path d="M806.5 48.5 Q806.5 46.5 808.5 46.5 H831.5 Q833.5 46.5 833.5 48.5 V61 H806.5 Z" stroke="none" fill="#e2e2e2" stroke-width="1" />
<rect x="810.5" y="57" width="19" height="10" fill="#8cc4ee" stroke="#f6f6f6" stroke-width="1.2"/>
<rect x="844.5" y="41" width="15" height="9" fill="#fbfbfb" />
<path d="M838.5 48.5 Q838.5 46.5 840.5 46.5 H863.5 Q865.5 46.5 865.5 48.5 V61 H838.5 Z" stroke="none" fill="#e2e2e2" stroke-width="1" />
<rect x="842.5" y="57" width="19" height="10" fill="#8cc4ee" stroke="#f6f6f6" stroke-width="1.2"/>
<path d="M846 60 H856 V57 L865 62 L856 67 V64 H846 Z" stroke="none" fill="#5faae8" stroke-width="1" />
<path d="M874.5 42 H893.5 L901 49.5 V62 H874.5 Z" stroke="none" fill="#d9d9d9" stroke-width="1" />
<path d="M893.5 42 V49.5 H901 Z" stroke="none" fill="#f4f4f4" stroke-width="1" />
<circle cx="887" cy="58" r="4.6" stroke="#8c8c8c" fill="#ececec" stroke-width="1.5" />
<path d="M890.5 61.5 L894.5 66" stroke="#9a8268" fill="none" stroke-width="2" />
<path d="M911 42.5 H916.5 L920 46.0 V53.5 H911 Z" stroke="none" fill="#e6e6e6" stroke-width="1" />
<path d="M916.5 42.5 V46.0 H920 Z" stroke="none" fill="#b5b5b5" stroke-width="1" />
<rect x="915" y="48.5" width="9" height="6.5" fill="#f6f6f6" stroke="#777" stroke-width="0.6"/>
<rect x="916.5" y="51" width="6" height="1" fill="#666" />
<rect x="912" y="62.5" width="8" height="3.5" fill="#f4f4f4" />
<rect x="910" y="65.5" width="11.5" height="5.5" fill="#e4e4e4" rx="1"/>
<rect x="912" y="69.5" width="7.5" height="4.5" fill="#f4f4f4" />
<rect x="912" y="70.5" width="4" height="3" fill="#6fb0e8" />
<circle cx="919.3" cy="71.5" r="2.2" stroke="#cfcfcf" fill="#8a8a8a" stroke-width="0.9" />
<path d="M921 73.3 L923.3 75.8" stroke="#b8b8b8" fill="none" stroke-width="1" />
<rect x="912" y="83" width="8" height="3.5" fill="#f4f4f4" />
<rect x="910" y="86" width="11.5" height="5.5" fill="#e4e4e4" rx="1"/>
<rect x="912" y="90" width="6" height="4.5" fill="#f4f4f4" />
<rect x="912" y="91" width="3.5" height="3" fill="#6fb0e8" />
<rect x="915.5" y="90.5" width="8.5" height="6.5" fill="#f6f6f6" stroke="#777" stroke-width="0.6"/>
<rect x="917" y="93" width="5.5" height="1.2" fill="#666" />
<circle cx="1047.9" cy="51.3" r="11" stroke="#7fdcec" fill="#8eeef6" stroke-width="0.8" />
<path d="M1040.5 43.5 Q1037 51 1041.5 59.5" stroke="#a8f4e6" fill="none" stroke-width="3.5" opacity="0.7"/>
<circle cx="1050.5" cy="50" r="7.2" stroke="#8fc0cc" fill="none" stroke-width="0.7" />
<path d="M1043.5 42 Q1040.5 52 1046 60.5" stroke="#8fc0cc" fill="none" stroke-width="0.7" />
<path d="M1063.8 50.5 L1064.2 64.7 L1049.6 61.8 Z" stroke="none" fill="#7ab8f0" stroke-width="1" />
<path d="M1063.8 50.5 L1057.5 63.8 L1049.6 61.8 Z" stroke="none" fill="#8fc6f6" stroke-width="1" />
<path d="M1063.8 50.5 L1057.5 63.8 L1058.6 66.5 L1060 63.9 Z" stroke="none" fill="#2f5f9e" stroke-width="1" />
<rect x="1170" y="42" width="9" height="9" fill="#6a6a6a" />
<path d="M1176 47 V55 L1178.3 53 L1180 56.5 L1181.3 55.8 L1179.7 52.5 L1182.5 52.3 Z" stroke="none" fill="#7d7d7d" stroke-width="1" />
<path d="M1170 62 H1174.5 L1178 65.5 V72 H1170 Z" stroke="none" fill="#727272" stroke-width="1" />
<path d="M1174.5 62 V65.5 H1178 Z" stroke="none" fill="#b5b5b5" stroke-width="1" />
<rect x="1174" y="68" width="8.5" height="6" fill="#777" stroke="#5a5a5a" stroke-width="0.6"/>
<path d="M1081 83.5 H1087.5 L1091 87.0 V95.0 H1081 Z" stroke="none" fill="#e6e6e6" stroke-width="1" />
<path d="M1087.5 83.5 V87.0 H1091 Z" stroke="none" fill="#b5b5b5" stroke-width="1" />
<circle cx="1088.5" cy="93" r="3" stroke="#444" fill="#bbb" stroke-width="1" />
<path d="M1104.5 83.5 H1111.0 L1114.5 87.0 V95.0 H1104.5 Z" stroke="none" fill="#e6e6e6" stroke-width="1" />
<path d="M1111.0 83.5 V87.0 H1114.5 Z" stroke="none" fill="#b5b5b5" stroke-width="1" />
<rect x="1104.5" y="90" width="11" height="6" fill="#3fa05a" />
<text x="1105.3" y="95" font-size="4.2" fill="#dff5e0" font-weight="bold" textLength="9.5" lengthAdjust="spacingAndGlyphs" >DWF</text>
<path d="M1111 82 L1108.5 87 H1111 L1109.5 91 L1114.5 85.5 H1112 L1113.5 82 Z" stroke="none" fill="#f0c23a" stroke-width="1" />
<path d="M1127.5 83.5 H1134.0 L1137.5 87.0 V95.0 H1127.5 Z" stroke="none" fill="#ecd6d6" stroke-width="1" />
<path d="M1134.0 83.5 V87.0 H1137.5 Z" stroke="none" fill="#b5b5b5" stroke-width="1" />
<rect x="1127.5" y="90" width="11" height="6" fill="#e0555a" />
<text x="1128.5" y="95" font-size="4.2" fill="#ffe9e9" font-weight="bold" textLength="9" lengthAdjust="spacingAndGlyphs" >PDF</text>
<path d="M1134 82 L1131.5 87 H1134 L1132.5 91 L1137.5 85.5 H1135 L1136.5 82 Z" stroke="none" fill="#f0c23a" stroke-width="1" />
<rect x="1197.5" y="51.5" width="8" height="4" fill="#f3f3f3" />
<rect x="1195" y="55.0" width="12.5" height="6" fill="#dcdcdc" rx="1"/>
<rect x="1197.5" y="58.5" width="8" height="5.5" fill="#f6f6f6" stroke="#889" stroke-width="0.5"/>
<circle cx="1200" cy="61.5" r="3" stroke="#345" fill="#cfd8e4" stroke-width="0.8" />
<rect x="1197.5" y="72.5" width="8" height="4" fill="#f3f3f3" />
<rect x="1195" y="76.0" width="12.5" height="6" fill="#dcdcdc" rx="1"/>
<rect x="1197.5" y="79.5" width="8" height="5.5" fill="#f6f6f6" stroke="#889" stroke-width="0.5"/>
<circle cx="1200" cy="82.5" r="3" stroke="#345" fill="#cfd8e4" stroke-width="0.8" />
<rect x="1228.0" y="51.5" width="8" height="4" fill="#f3f3f3" />
<rect x="1225.5" y="55.0" width="12.5" height="6" fill="#dcdcdc" rx="1"/>
<rect x="1228.0" y="58.5" width="8" height="5.5" fill="#f6f6f6" stroke="#889" stroke-width="0.5"/>
<circle cx="1230.5" cy="61.5" r="3" stroke="#345" fill="#cfd8e4" stroke-width="0.8" />
<path d="M1232 59 L1238 65 M1238 59 L1232 65" stroke="#e03a2a" fill="none" stroke-width="1.8" />
<circle cx="1259.5" cy="46.5" r="5.2" stroke="#8e8e8e" fill="none" stroke-width="1.2" />
<path d="M1257.7 60 V46 Q1257.7 44 1259.5 44 Q1261.3 44 1261.3 46 V54 L1263 53.5 Q1265 53 1265.3 55 L1267 54.7 Q1269 54.5 1269.2 56.3 Q1271.5 56.3 1271.5 58.5 V62.5 Q1271.5 66 1269 67.5 H1260 Q1257 65 1253.5 59.5 Q1252.5 57.5 1254.3 57 Q1256 56.8 1257.7 60 Z" stroke="none" fill="#fafafa" stroke-width="1" />
<path d="M12 138.5 Q16 138 17.5 133 L20 124 Q21 120.8 24.5 120.8 H110 Q114 120.8 115 124 L117 133 Q118 138 121 138.5 Z" stroke="#666" fill="url(#gFileTab)" stroke-width="0.8" />
<path d="M114 138.5 Q118 138 119.5 133 L122 124 Q123 120.8 126.5 120.8 H252 Q256 120.8 257 124 L259 133 Q260 138 263 138.5 Z" stroke="#666" fill="url(#gFileTab)" stroke-width="0.8" />
<path d="M255 138.5 Q259 138 260.5 133 L263 124 Q264 120.8 267.5 120.8 H402 Q406 120.8 407 124 L409 133 Q410 138 413 138.5 Z" stroke="#7a7a7a" fill="url(#gFileTabA)" stroke-width="0.8" />
<text x="26" y="134.5" font-size="11.5" fill="#d2d2d2" textLength="20.5" lengthAdjust="spacingAndGlyphs" >Start</text>
<text x="129" y="134.5" font-size="11.5" fill="#cfcfcf" textLength="107.5" lengthAdjust="spacingAndGlyphs" >AS2019 for my AU class*</text>
<text x="270" y="134.5" font-size="11.5" fill="#ffffff" textLength="111" lengthAdjust="spacingAndGlyphs" >Assembly B83 Sheet 1-A*</text>
<path d="M246 128 L251 133 M251 128 L246 133" stroke="#3c3c3c" fill="none" stroke-width="1.8" />
<path d="M391 128 L396 133 M396 128 L391 133" stroke="#444" fill="none" stroke-width="1.8" />
<path d="M412.3 126 Q412.5 124 415 124 H424 Q428 124.5 429.5 130 L430.2 137 Q430 137.8 428 137.7 H419 Q415 137 413.5 132 Z" stroke="#5c5c5c" fill="#505050" stroke-width="0.8" />
<path d="M418 131 H424.6 M421.3 127.7 V134.3" stroke="#dcdcdc" fill="none" stroke-width="1.8" />
<rect x="1273" y="143" width="5" height="537" fill="#b9cfe8" />
<rect x="1273.5" y="143" width="2" height="537" fill="#a9c4e2" />
<rect x="1278" y="143" width="2" height="537" fill="#4a4f55" />
<rect x="282" y="657.5" width="715" height="23" fill="#ffffff" stroke="#b5b5b5" stroke-width="1"/>
<rect x="282" y="657.5" width="45" height="23" fill="#7c7c7c" />
<rect x="284" y="660" width="1" height="1" fill="#c8c8c8" />
<rect x="286" y="660" width="1" height="1" fill="#c8c8c8" />
<rect x="285" y="661" width="1" height="1" fill="#555" />
<rect x="284" y="662" width="1" height="1" fill="#c8c8c8" />
<rect x="286" y="662" width="1" height="1" fill="#c8c8c8" />
<rect x="285" y="663" width="1" height="1" fill="#555" />
<rect x="284" y="664" width="1" height="1" fill="#c8c8c8" />
<rect x="286" y="664" width="1" height="1" fill="#c8c8c8" />
<rect x="285" y="665" width="1" height="1" fill="#555" />
<rect x="284" y="666" width="1" height="1" fill="#c8c8c8" />
<rect x="286" y="666" width="1" height="1" fill="#c8c8c8" />
<rect x="285" y="667" width="1" height="1" fill="#555" />
<rect x="284" y="668" width="1" height="1" fill="#c8c8c8" />
<rect x="286" y="668" width="1" height="1" fill="#c8c8c8" />
<rect x="285" y="669" width="1" height="1" fill="#555" />
<rect x="284" y="670" width="1" height="1" fill="#c8c8c8" />
<rect x="286" y="670" width="1" height="1" fill="#c8c8c8" />
<rect x="285" y="671" width="1" height="1" fill="#555" />
<rect x="284" y="672" width="1" height="1" fill="#c8c8c8" />
<rect x="286" y="672" width="1" height="1" fill="#c8c8c8" />
<rect x="285" y="673" width="1" height="1" fill="#555" />
<rect x="284" y="674" width="1" height="1" fill="#c8c8c8" />
<rect x="286" y="674" width="1" height="1" fill="#c8c8c8" />
<rect x="285" y="675" width="1" height="1" fill="#555" />
<rect x="284" y="676" width="1" height="1" fill="#c8c8c8" />
<rect x="286" y="676" width="1" height="1" fill="#c8c8c8" />
<rect x="285" y="677" width="1" height="1" fill="#555" />
<rect x="284" y="678" width="1" height="1" fill="#c8c8c8" />
<rect x="286" y="678" width="1" height="1" fill="#c8c8c8" />
<rect x="285" y="679" width="1" height="1" fill="#555" />
<path d="M295 665 L301.5 672 M301.5 665 L295 672" stroke="#fff" fill="none" stroke-width="1.8" />
<path d="M313 664.5 Q316.5 663 318 666 L322.5 671.5 Q323.5 673 322 673.8 Q320.8 674.3 320 673 L315.5 668 Q312.5 668.5 312 665.8 L314.3 667 L315.5 665.8 Z" stroke="none" fill="#f2f2f2" stroke-width="1" />
<rect x="331.5" y="662.5" width="12" height="12" fill="#e2e2ec" stroke="#bcbcc8" stroke-width="0.8" rx="1.5"/>
<path d="M334 666 L337 668.5 L334 671 M338 671.5 H341.5" stroke="#555" fill="none" stroke-width="1.1" />
<path d="M345.5 667.5 H350.5 L348 670.5 Z" stroke="none" fill="#777" stroke-width="1" />
<text x="357.5" y="672.5" font-size="10.5" fill="#b4b4b4" font-style="italic" font-family='"Liberation Mono", monospace' textLength="82" lengthAdjust="spacingAndGlyphs" >Type a command</text>
<text x="862" y="686.5" font-size="12" fill="#a8a8a8" textLength="54" lengthAdjust="spacingAndGlyphs" >2x m1000</text>
<rect x="0" y="680" width="1280" height="40" fill="#343434" />
<rect x="0" y="718.5" width="40" height="1.5" fill="#0e0e0e" />
<rect x="327" y="718.5" width="373" height="1.5" fill="#0e0e0e" />
<path d="M5 695.5 Q9 695 10.5 690 L12 685 Q13 682.5 16 682.5 H46 Q49 682.5 50 685 L52 691 Q53.5 695 57 695.5 Z" stroke="#6a6a6a" fill="url(#gLt)" stroke-width="0.7" />
<text x="19" y="692" font-size="10.5" fill="#bdbdbd" textLength="28.5" lengthAdjust="spacingAndGlyphs" >Model</text>
<path d="M55.5 695.5 Q59.5 695 61 690 L63 684.5 Q64 682 67 682 H171 Q174 682 175 684.5 L177.5 691 Q179 695 183 695.5 Z" stroke="#8a8a8a" fill="url(#gLtA)" stroke-width="0.7" />
<text x="68.5" y="692" font-size="10.5" fill="#ffffff" font-weight="bold" textLength="101.5" lengthAdjust="spacingAndGlyphs" >ANSI-C Advance Steel</text>
<path d="M183.5 695 L187 685 Q187.8 683 190 683 H197 Q200 683 199.3 685.5 L196.5 693 Q195.8 695 193.5 695 Z" stroke="#6a6a6a" fill="#4e4e4e" stroke-width="0.7" />
<path d="M188.5 689 H195.5 M192 685.5 V692.5" stroke="#ddd" fill="none" stroke-width="1.3" />
<rect x="874.5" y="697" width="405.5" height="21" fill="#4c4c4c" stroke="#6a6a6a" stroke-width="0.8"/>
<text x="878.5" y="712" font-size="10.5" fill="#f4f4f4" textLength="29" lengthAdjust="spacingAndGlyphs" >PAPER</text>
<rect x="910.8" y="698.5" width="1" height="18" fill="#767676" />
<rect x="1051" y="698.5" width="1" height="18" fill="#767676" />
<rect x="1112.5" y="698.5" width="1" height="18" fill="#767676" />
<rect x="1147.5" y="698.5" width="1" height="18" fill="#767676" />
<rect x="1166.5" y="698.5" width="1" height="18" fill="#767676" />
<rect x="1191" y="698.5" width="1" height="18" fill="#767676" />
<rect x="1237" y="698.5" width="1" height="18" fill="#767676" />
<path d="M916.5 700.5 V713.5 H929 M916.5 709.5 H920.5 V713.5" stroke="#d8d8d8" fill="none" stroke-width="1" />
<rect x="932.5" y="698.5" width="19.5" height="18" fill="#4f86c9" />
<circle cx="941.5" cy="708" r="5" stroke="#f4f4f4" fill="none" stroke-width="1.2" />
<path d="M941.5 708 H949 M941.5 708 L945 703" stroke="#f4f4f4" fill="none" stroke-width="1" />
<path d="M955.5 706 H961 L958.3 709 Z" stroke="none" fill="#f0f0f0" stroke-width="1" />
<path d="M970 702 L979 714 M975 700.5 V715.5 M970.5 708 H979" stroke="#8c8c8c" fill="none" stroke-width="1" />
<path d="M974 707 L977 710" stroke="#b96" fill="none" stroke-width="1.2" />
<path d="M988.5 706 H994 L991.3 709 Z" stroke="none" fill="#f0f0f0" stroke-width="1" />
<rect x="998.5" y="698.5" width="19" height="18" fill="#4f86c9" />
<rect x="1018.5" y="698.5" width="19" height="18" fill="#4f86c9" />
<path d="M1001.5 713.5 H1015 M1001.5 713.5 L1013.5 702.5" stroke="#f6f6f6" fill="none" stroke-width="1.3" />
<rect x="1023" y="703" width="11" height="10.5" fill="none" stroke="#f6f6f6" stroke-width="1.2"/>
<rect x="1021.5" y="701.5" width="3.2" height="3.2" fill="#4f86c9" stroke="#f6f6f6" stroke-width="0.9"/>
<path d="M1041.5 706 H1047 L1044.3 709 Z" stroke="none" fill="#f0f0f0" stroke-width="1" />
<rect x="1057" y="702" width="11.5" height="12" fill="none" stroke="#cfcfcf" stroke-width="1" stroke-dasharray="2 1.4"/>
<rect x="1060" y="705.5" width="5.5" height="5.5" fill="none" stroke="#e8e8e8" stroke-width="1"/>
<path d="M1076 714.5 L1082 700.5 L1088 714.5 L1082 709.5 Z" stroke="none" fill="#e6e6e6" stroke-width="1" />
<path d="M1096 714.5 L1102 700.5 L1108 714.5 L1102 709.5 Z" stroke="none" fill="#e6e6e6" stroke-width="1" />
<circle cx="1090" cy="702.5" r="1.6" stroke="#e6e6e6" fill="none" stroke-width="0.9" />
<path d="M1106 701 L1109.5 698.8 L1108.5 703.5" stroke="#e6e6e6" fill="none" stroke-width="1" />
<circle cx="1124.5" cy="708" r="5" stroke="#ececec" fill="none" stroke-width="3" stroke-dasharray="2.6 1.3"/>
<circle cx="1124.5" cy="708" r="2.6" stroke="none" fill="#ececec" stroke-width="1" />
<circle cx="1124.5" cy="708" r="1.5" stroke="none" fill="#4c4c4c" stroke-width="1" />
<path d="M1138 706 H1143.5 L1140.8 709 Z" stroke="none" fill="#f0f0f0" stroke-width="1" />
<path d="M1150.5 708 H1163 M1156.8 701.5 V714.5" stroke="#f2f2f2" fill="none" stroke-width="1.6" />
<rect x="1173.5" y="701.5" width="4.5" height="4.5" fill="none" stroke="#e0e0e0" stroke-width="1"/>
<circle cx="1183" cy="706.5" r="2.6" stroke="#e0e0e0" fill="none" stroke-width="1" />
<path d="M1174 714.5 L1177 709.5 L1180 714.5 Z" stroke="#e0e0e0" fill="none" stroke-width="1" />
<path d="M1196 701 H1204 L1207 704 V714.5 H1196 Z" stroke="none" fill="#6fb3e8" stroke-width="1" />
<rect x="1195.5" y="707" width="7" height="5.5" fill="#f2d24a" />
<path d="M1203 711.5 L1205 714 L1208.5 709" stroke="#3fae49" fill="none" stroke-width="1.4" />
<rect x="1216" y="702" width="12" height="9.5" fill="#f0f0f0" />
<path d="M1217 710 L1220.5 704 L1224 710" stroke="#555" fill="none" stroke-width="0.9" />
<path d="M1222.5 715.5 L1226 708.5 L1229.5 715.5 Z" stroke="none" fill="#ee8a3a" stroke-width="1" />
<rect x="1242.5" y="702.5" width="12.5" height="10.5" fill="none" stroke="#d8d8d8" stroke-width="1"/>
<path d="M1245 711 L1252.5 704.5 M1249.5 704.5 H1252.5 V707.5 M1245 708 V711 H1248" stroke="#ececec" fill="none" stroke-width="1.1" />
<rect x="1262" y="702.5" width="13.5" height="1.8" fill="#f0f0f0" />
<rect x="1262" y="707.5" width="13.5" height="1.8" fill="#f0f0f0" />
<rect x="1262" y="712.5" width="13.5" height="1.8" fill="#f0f0f0" />
<text x="1141.5" y="203.5" font-size="12.5" fill="#1b7886" textLength="54" lengthAdjust="spacingAndGlyphs" stroke="#1b7886" stroke-width="0.1" >2⅜&quot;2⅜&quot;</text>
<line x1="1152" y1="208.3" x2="1185" y2="208.3" stroke="#2a2a2a" stroke-width="0.9" />
<line x1="1153.8" y1="206.5" x2="1153.8" y2="245" stroke="#6a6a6a" stroke-width="1" />
<line x1="1151.3999999999999" y1="210.70000000000002" x2="1156.2" y2="205.9" stroke="#141414" stroke-width="1.25" />
<line x1="1168.5" y1="206.5" x2="1168.5" y2="245" stroke="#2a2a2a" stroke-width="1" />
<line x1="1166.1" y1="210.70000000000002" x2="1170.9" y2="205.9" stroke="#141414" stroke-width="1.25" />
<line x1="1183" y1="206.5" x2="1183" y2="245" stroke="#6a6a6a" stroke-width="1" />
<line x1="1180.6" y1="210.70000000000002" x2="1185.4" y2="205.9" stroke="#141414" stroke-width="1.25" />
<line x1="1152.5" y1="235.4" x2="1184.5" y2="235.4" stroke="#86bfae" stroke-width="1.1" />
<line x1="1152.5" y1="237" x2="1184.5" y2="237" stroke="#9cc6bc" stroke-width="1" />
<line x1="1152.5" y1="317.2" x2="1184.5" y2="317.2" stroke="#86bfae" stroke-width="1.1" />
<line x1="1152.5" y1="315.6" x2="1184.5" y2="315.6" stroke="#9cc6bc" stroke-width="1" />
<line x1="1167.6" y1="237" x2="1167.6" y2="316" stroke="#9cc0cc" stroke-width="1" />
<line x1="1169.6" y1="237" x2="1169.6" y2="316" stroke="#9cc0cc" stroke-width="1" />
<line x1="1168.6" y1="245" x2="1168.6" y2="296" stroke="#d24a4a" stroke-width="1.6" />
<rect x="1146.8" y="245.5" width="44" height="50.6" fill="#fdfefe" stroke="#a3b3ba" stroke-width="1"/>
<line x1="1168.6" y1="245.5" x2="1168.6" y2="296" stroke="#b43838" stroke-width="2.8" />
<circle cx="1154.2" cy="253" r="2.6" stroke="none" fill="#bfc5c9" stroke-width="1" />
<circle cx="1183" cy="253" r="2.6" stroke="none" fill="#bfc5c9" stroke-width="1" />
<rect x="1163.2" y="248.8" width="9" height="8.4" fill="#eef6f4" stroke="#9fbfc4" stroke-width="0.9"/>
<rect x="1172.2" y="249.4" width="5.6" height="7.2" fill="#f6fafa" stroke="#9fbfc4" stroke-width="0.9"/>
<circle cx="1168.6" cy="253" r="3" stroke="#c4e070" fill="#dcf26a" stroke-width="0.8" />
<circle cx="1154.2" cy="271.3" r="2.6" stroke="none" fill="#bfc5c9" stroke-width="1" />
<circle cx="1183" cy="271.3" r="2.6" stroke="none" fill="#bfc5c9" stroke-width="1" />
<rect x="1163.2" y="267.1" width="9" height="8.4" fill="#eef6f4" stroke="#9fbfc4" stroke-width="0.9"/>
<rect x="1172.2" y="267.7" width="5.6" height="7.2" fill="#f6fafa" stroke="#9fbfc4" stroke-width="0.9"/>
<circle cx="1168.6" cy="271.3" r="3" stroke="#c4e070" fill="#dcf26a" stroke-width="0.8" />
<circle cx="1154.2" cy="289.2" r="2.6" stroke="none" fill="#bfc5c9" stroke-width="1" />
<circle cx="1183" cy="289.2" r="2.6" stroke="none" fill="#bfc5c9" stroke-width="1" />
<rect x="1163.2" y="285.0" width="9" height="8.4" fill="#eef6f4" stroke="#9fbfc4" stroke-width="0.9"/>
<rect x="1172.2" y="285.59999999999997" width="5.6" height="7.2" fill="#f6fafa" stroke="#9fbfc4" stroke-width="0.9"/>
<circle cx="1168.6" cy="289.2" r="3" stroke="#c4e070" fill="#dcf26a" stroke-width="0.8" />
<line x1="1101.5" y1="234.9" x2="1144.7" y2="234.9" stroke="#2a2a2a" stroke-width="0.9" />
<line x1="1101.5" y1="253" x2="1147" y2="253" stroke="#2a2a2a" stroke-width="0.9" />
<line x1="1101.5" y1="271.3" x2="1147" y2="271.3" stroke="#2a2a2a" stroke-width="0.9" />
<line x1="1101.5" y1="289.2" x2="1147" y2="289.2" stroke="#2a2a2a" stroke-width="0.9" />
<line x1="1102.2" y1="234.9" x2="1102.2" y2="289.2" stroke="#2a2a2a" stroke-width="0.9" />
<line x1="1099.9" y1="237.20000000000002" x2="1104.5" y2="232.6" stroke="#141414" stroke-width="1.25" />
<line x1="1099.9" y1="255.3" x2="1104.5" y2="250.7" stroke="#141414" stroke-width="1.25" />
<line x1="1099.9" y1="273.6" x2="1104.5" y2="269.0" stroke="#141414" stroke-width="1.25" />
<line x1="1099.9" y1="291.5" x2="1104.5" y2="286.9" stroke="#141414" stroke-width="1.25" />
<text x="1099" y="249" font-size="12.5" fill="#1b7886" textLength="10.5" lengthAdjust="spacingAndGlyphs" stroke="#1b7886" stroke-width="0.1" transform="rotate(-90 1099 249)" >3&quot;</text>
<text x="1099" y="267.5" font-size="12.5" fill="#1b7886" textLength="10.5" lengthAdjust="spacingAndGlyphs" stroke="#1b7886" stroke-width="0.1" transform="rotate(-90 1099 267.5)" >3&quot;</text>
<text x="1099" y="285.5" font-size="12.5" fill="#1b7886" textLength="10.5" lengthAdjust="spacingAndGlyphs" stroke="#1b7886" stroke-width="0.1" transform="rotate(-90 1099 285.5)" >3&quot;</text>
<text x="1194" y="235.4" font-size="11.5" fill="#111" textLength="60.5" lengthAdjust="spacingAndGlyphs" >3x ¾&quot;øx2&quot;</text>
<path d="M1254.5 239.3 H1194 L1177.6 251.5" stroke="#2a2a2a" fill="none" stroke-width="0.9" />
<path d="M1177.6 251.5 L1180.8 247.5 L1182.4 249.6 Z" stroke="none" fill="#2a2a2a" stroke-width="1" />
<text x="1092" y="315" font-size="12" fill="#111" textLength="54" lengthAdjust="spacingAndGlyphs" >2x m1001</text>
<path d="M1092 318.6 H1148 L1157.4 296.8" stroke="#2a2a2a" fill="none" stroke-width="0.9" />
<path d="M1157.4 296.8 L1156.6 301.9 L1154.2 300.9 Z" stroke="none" fill="#2a2a2a" stroke-width="1" />
<path d="M1148 318.6 L1180.8 296.8" stroke="#2a2a2a" fill="none" stroke-width="0.9" />
<path d="M1180.8 296.8 L1177.4 300.7 L1175.9 298.5 Z" stroke="none" fill="#2a2a2a" stroke-width="1" />
<text x="1113.8" y="361.7" font-size="20" fill="#2b7217" textLength="115" lengthAdjust="spacingAndGlyphs" >Section A - A</text>
<line x1="1113.8" y1="365.4" x2="1230.3" y2="365.4" stroke="#86a87c" stroke-width="1.6" />
<text x="1156" y="457.8" font-size="12.5" fill="#1b7886" textLength="52.5" lengthAdjust="spacingAndGlyphs" stroke="#1b7886" stroke-width="0.1" >2⅛&quot;2⅛&quot;</text>
<line x1="1166.5" y1="461.8" x2="1196.5" y2="461.8" stroke="#2a2a2a" stroke-width="0.9" />
<line x1="1168.6" y1="459.5" x2="1168.6" y2="498" stroke="#777" stroke-width="1" />
<line x1="1166.1999999999998" y1="464.2" x2="1171.0" y2="459.40000000000003" stroke="#141414" stroke-width="1.25" />
<line x1="1181.4" y1="459.5" x2="1181.4" y2="498" stroke="#2a2a2a" stroke-width="1" />
<line x1="1179.0" y1="464.2" x2="1183.8000000000002" y2="459.40000000000003" stroke="#141414" stroke-width="1.25" />
<line x1="1194.2" y1="459.5" x2="1194.2" y2="498" stroke="#777" stroke-width="1" />
<line x1="1191.8" y1="464.2" x2="1196.6000000000001" y2="459.40000000000003" stroke="#141414" stroke-width="1.25" />
<rect x="1166.4" y="488.7" width="30.6" height="3" fill="#c4dce4" stroke="#94b8c6" stroke-width="0.8"/>
<rect x="1166.4" y="568.9" width="30.6" height="2.8" fill="#c4dce4" stroke="#94b8c6" stroke-width="0.8"/>
<path d="M1178.6 568.9 Q1180.2 568.5 1180.2 566 H1183.2 Q1183.2 568.5 1184.8 568.9 Z" stroke="none" fill="#c4dce4" stroke-width="1" />
<rect x="1180.1" y="491.8" width="3.1" height="77" fill="#cfe2e8" stroke="#9cc0cc" stroke-width="0.8"/>
<rect x="1162.4" y="498.3" width="38.4" height="53.8" fill="#fdfefe" stroke="#a3b3ba" stroke-width="1"/>
<line x1="1181.5" y1="498.5" x2="1181.5" y2="552" stroke="#c47e5e" stroke-width="2.8" />
<circle cx="1169.6" cy="507" r="2.6" stroke="none" fill="#bfc5c9" stroke-width="1" />
<circle cx="1194.2" cy="507" r="2.6" stroke="none" fill="#bfc5c9" stroke-width="1" />
<rect x="1178" y="502.4" width="9" height="9.2" fill="#d2f29c" stroke="#58a058" stroke-width="0.9"/>
<path d="M1178 503 H1173 L1170.8 505 V509 L1173 511 H1178 Z" stroke="#58a058" fill="#e6f6d8" stroke-width="0.9" />
<circle cx="1181.8" cy="507" r="2.8" stroke="none" fill="#e6ff7e" stroke-width="1" />
<circle cx="1169.6" cy="524.5" r="2.6" stroke="none" fill="#bfc5c9" stroke-width="1" />
<circle cx="1194.2" cy="524.5" r="2.6" stroke="none" fill="#bfc5c9" stroke-width="1" />
<rect x="1178" y="519.9" width="9" height="9.2" fill="#d2f29c" stroke="#58a058" stroke-width="0.9"/>
<path d="M1178 520.5 H1173 L1170.8 522.5 V526.5 L1173 528.5 H1178 Z" stroke="#58a058" fill="#e6f6d8" stroke-width="0.9" />
<circle cx="1181.8" cy="524.5" r="2.8" stroke="none" fill="#e6ff7e" stroke-width="1" />
<circle cx="1169.6" cy="542.4" r="2.6" stroke="none" fill="#bfc5c9" stroke-width="1" />
<circle cx="1194.2" cy="542.4" r="2.6" stroke="none" fill="#bfc5c9" stroke-width="1" />
<rect x="1178" y="537.8" width="9" height="9.2" fill="#d2f29c" stroke="#58a058" stroke-width="0.9"/>
<path d="M1178 538.4 H1173 L1170.8 540.4 V544.4 L1173 546.4 H1178 Z" stroke="#58a058" fill="#e6f6d8" stroke-width="0.9" />
<circle cx="1181.8" cy="542.4" r="2.8" stroke="none" fill="#e6ff7e" stroke-width="1" />
<line x1="1116.9" y1="489.3" x2="1157.4" y2="489.3" stroke="#2a2a2a" stroke-width="0.9" />
<line x1="1116.9" y1="507" x2="1162" y2="507" stroke="#2a2a2a" stroke-width="0.9" />
<line x1="1116.9" y1="524.5" x2="1162" y2="524.5" stroke="#2a2a2a" stroke-width="0.9" />
<line x1="1116.9" y1="542.4" x2="1162" y2="542.4" stroke="#2a2a2a" stroke-width="0.9" />
<line x1="1117.5" y1="489.3" x2="1117.5" y2="542.4" stroke="#2a2a2a" stroke-width="0.9" />
<line x1="1115.2" y1="491.6" x2="1119.8" y2="487.0" stroke="#141414" stroke-width="1.25" />
<line x1="1115.2" y1="509.3" x2="1119.8" y2="504.7" stroke="#141414" stroke-width="1.25" />
<line x1="1115.2" y1="526.8" x2="1119.8" y2="522.2" stroke="#141414" stroke-width="1.25" />
<line x1="1115.2" y1="544.6999999999999" x2="1119.8" y2="540.1" stroke="#141414" stroke-width="1.25" />
<text x="1114.5" y="503" font-size="12.5" fill="#1b7886" textLength="10.5" lengthAdjust="spacingAndGlyphs" stroke="#1b7886" stroke-width="0.1" transform="rotate(-90 1114.5 503)" >3&quot;</text>
<text x="1114.5" y="520.5" font-size="12.5" fill="#1b7886" textLength="10.5" lengthAdjust="spacingAndGlyphs" stroke="#1b7886" stroke-width="0.1" transform="rotate(-90 1114.5 520.5)" >3&quot;</text>
<text x="1114.5" y="539" font-size="12.5" fill="#1b7886" textLength="10.5" lengthAdjust="spacingAndGlyphs" stroke="#1b7886" stroke-width="0.1" transform="rotate(-90 1114.5 539)" >3&quot;</text>
<text x="1106.3" y="571" font-size="12" fill="#111" textLength="53.5" lengthAdjust="spacingAndGlyphs" >2x m1000</text>
<path d="M1106.3 574.3 H1161.6 L1176.6 547.8" stroke="#2a2a2a" fill="none" stroke-width="0.9" />
<path d="M1176.6 547.8 L1175.3 552.8 L1173.0 551.5 Z" stroke="none" fill="#2a2a2a" stroke-width="1" />
<path d="M1159 574.3 L1174 547.8" stroke="#2a2a2a" fill="none" stroke-width="0.9" />
<text x="1098.5" y="617.4" font-size="20" fill="#2b7217" textLength="114.5" lengthAdjust="spacingAndGlyphs" >Section B - B</text>
<line x1="1098.5" y1="620.9" x2="1214.5" y2="620.9" stroke="#86a87c" stroke-width="1.6" />
<text x="936" y="676.3" font-size="12" fill="#a2a2a2" textLength="59" lengthAdjust="spacingAndGlyphs" >3x ¾&quot;øx2&quot;</text>
<path d="M989.5 668 L994 670.3 L989.5 672.6 Z" stroke="none" fill="#222" stroke-width="1" />
</svg></body></html>
